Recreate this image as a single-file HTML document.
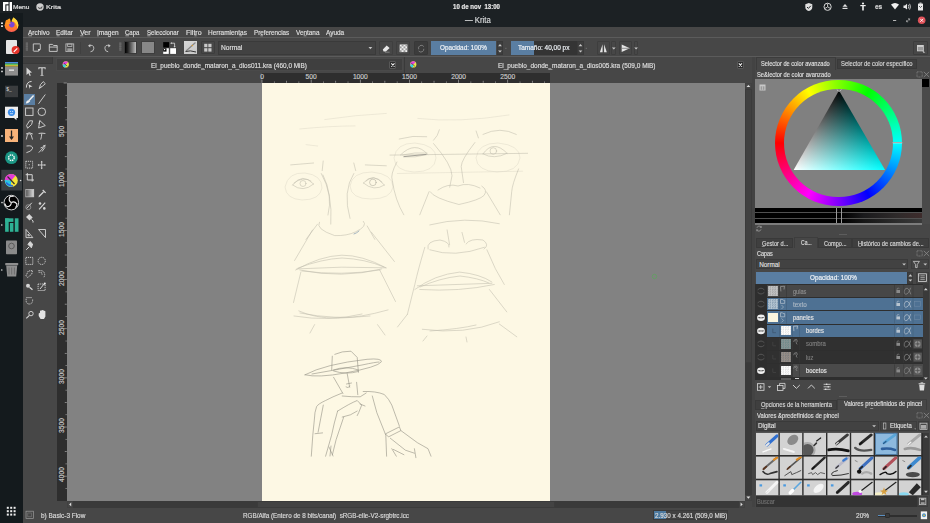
<!DOCTYPE html>
<html><head><meta charset="utf-8"><style>*{margin:0;padding:0;box-sizing:border-box}
html,body{width:930px;height:523px;overflow:hidden;background:#1c2124;font-family:"Liberation Sans",sans-serif;position:relative}
.a{position:absolute}
.t{position:absolute;white-space:nowrap;line-height:1;-webkit-text-stroke:0.18px currentColor;}
svg{overflow:visible}
</style></head><body>
<div class="a" style="left:0px;top:0px;width:930px;height:27px;background:#1c2124;"></div>
<div class="a" style="left:0px;top:13px;width:23px;height:510px;background:#141a1d;"></div>
<svg class="a" style="left:3px;top:2px;" width="9" height="9" viewBox="0 0 9 9"><rect x="0" y="0" width="5.5" height="2.3" fill="#fff"/><rect x="0" y="0" width="2.3" height="9" fill="#fff"/><rect x="3.4" y="3.4" width="2.1" height="5.6" fill="#fff"/><rect x="6.6" y="0" width="2.4" height="9" fill="#fff"/></svg>
<div class="t" style="left:12.9px;top:4.0px;font-size:6px;color:#e0e0e0;transform-origin:0 0;transform:scaleX(1.0927);">Menu</div>
<svg class="a" style="left:36px;top:3px;" width="8" height="8" viewBox="0 0 8 8"><circle cx="4" cy="4" r="3.7" fill="#cfcfcf"/><path d="M1.5 3.5 L4 5 L6.5 3 L6 5.5 L3 6 Z" fill="#555"/></svg>
<div class="t" style="left:45.6px;top:4.0px;font-size:6px;color:#e0e0e0;transform-origin:0 0;transform:scaleX(1.2159);">Krita</div>
<div class="t" style="left:453.2px;top:4.4px;font-size:6.4px;color:#e6e6e6;font-weight:bold;transform-origin:0 0;transform:scaleX(0.9505);">10 de nov &nbsp;13:00</div>
<div class="t" style="left:465.3px;top:17px;font-size:8.2px;color:#d8dadb;transform-origin:0 0;transform:scaleX(0.9437);">— Krita</div>
<svg class="a" style="left:0px;top:0px;" width="930" height="27" viewBox="0 0 930 27">
<path d="M808.8 3 L812.3 4.3 L812.3 7 Q812.3 10 808.8 11 Q805.3 10 805.3 7 L805.3 4.3 Z" fill="#e0e0e0"/>
<path d="M807 7 L808.4 8.4 L810.8 5.8" stroke="#1c2124" stroke-width="1" fill="none"/>
<circle cx="827.6" cy="6.8" r="3.6" fill="none" stroke="#d8d8d8" stroke-width="1"/>
<path d="M827.6 3.5 L827.6 6.8 L824.8 8.5 M827.6 6.8 L830.4 8.5" stroke="#d8d8d8" stroke-width="0.9"/>
<path d="M842.5 6.8 L845 4 L847.5 6.8 Z" fill="#e0e0e0"/><rect x="842.5" y="7.8" width="5" height="1.2" fill="#e0e0e0"/>
<circle cx="863" cy="3.5" r="1.1" fill="#eee"/><rect x="860.3" y="5" width="5.4" height="1.2" fill="#eee"/><rect x="862.2" y="5" width="1.6" height="5.5" fill="#eee"/>
<path d="M891 4.5 Q895 1.5 899 4.5 L895 9.5 Z" fill="#f0f0f0"/>
<path d="M903.5 5.5 L905 5.5 L907 3.8 L907 9.6 L905 8 L903.5 8 Z" fill="#e8e8e8"/><path d="M908.2 4.8 Q909.5 6.7 908.2 8.6 M909.6 3.8 Q911.4 6.7 909.6 9.6" stroke="#e8e8e8" stroke-width="0.8" fill="none"/>
<rect x="918" y="3.5" width="5" height="7" rx="0.6" fill="#e8e8e8"/><rect x="919.5" y="2.6" width="2" height="1" fill="#e8e8e8"/><path d="M919 6 L920.5 7.5 L922 6" stroke="#1c2124" stroke-width="0.7" fill="none"/>
</svg>
<div class="t" style="left:875.4px;top:2.9px;font-size:8px;color:#d8d8d8;font-weight:bold;transform-origin:0 0;transform:scaleX(0.8091);">es</div>
<svg class="a" style="left:0px;top:0px;" width="930" height="27" viewBox="0 0 930 27"><rect x="893" y="20" width="3.2" height="0.9" fill="#c8c8c8"/><path d="M906.6 21.8 L909.6 18.8 M908 18.8 L909.6 18.8 L909.6 20.4 M906.6 20.2 L906.6 21.8 L908.2 21.8" stroke="#bbb" stroke-width="0.7" fill="none"/><circle cx="921.7" cy="20.3" r="3.8" fill="#e0525a"/><path d="M920.2 18.8 L923.2 21.8 M923.2 18.8 L920.2 21.8" stroke="#fff" stroke-width="0.9"/></svg>
<svg class="a" style="left:0px;top:0px;" width="23" height="523" viewBox="0 0 23 523">
<rect x="1" y="22.4" width="2" height="1.6" fill="#ddd"/><rect x="1" y="25.4" width="2" height="1.6" fill="#ddd"/>
<defs><linearGradient id="ffg" x1="0" y1="0" x2="0" y2="1"><stop offset="0" stop-color="#ffa41c"/><stop offset="0.7" stop-color="#ff7a2a"/><stop offset="1" stop-color="#ff5a5a"/></linearGradient></defs>
<circle cx="11.5" cy="25.2" r="6.9" fill="url(#ffg)"/>
<path d="M11.5 24.5 L9.6 17.2 Q11.5 16.6 13 17.6 Z" fill="#141a1d"/>
<path d="M5.5 22 L6.3 19.8 L7.3 21 L8.2 19.8 L9 21.5 Z" fill="#ff8a1e"/>
<path d="M11.3 21.6 L13.4 17.3 Q17.6 19.8 18.3 24.6 Q18.4 27.2 17.2 28.8 Q17.2 23.8 13.6 21.6 Z" fill="#ffd53a"/>
<circle cx="11.8" cy="24.6" r="2.8" fill="#7b46d6"/>
<path d="M6.8 23.3 Q9 23 10.5 23.6" stroke="#ffa030" stroke-width="1" fill="none"/>
<rect x="6" y="40" width="11" height="14" rx="0.8" fill="#e6e6e6"/>
<circle cx="15.6" cy="50" r="4" fill="#e5332a"/><path d="M13.8 51.8 L17.3 48.3" stroke="#fff" stroke-width="1.2"/>
<circle cx="2" cy="68" r="0.9" fill="#ddd"/><circle cx="2" cy="71.4" r="0.9" fill="#ddd"/>
<rect x="5" y="62" width="13" height="1.6" fill="#4a8be0"/><rect x="5" y="63.6" width="13" height="1.6" fill="#5fc05a"/><rect x="5" y="65.2" width="13" height="1.4" fill="#f0d13a"/>
<rect x="5" y="66.6" width="13" height="9" fill="#8c8c8c"/><rect x="9" y="69.5" width="5" height="1.3" fill="#eee"/>
<rect x="5" y="85.7" width="13" height="11.5" fill="#3a3d3f"/><text x="6.2" y="90.5" font-size="4.5" fill="#eee" font-family="Liberation Mono">$_</text>
<rect x="5" y="106.7" width="13" height="11.3" fill="#eeeeee"/><path d="M14 118 L16.5 120.3 L16.5 118 Z" fill="#eee"/>
<circle cx="11.5" cy="112.3" r="3.6" fill="#3b8de8"/><circle cx="10.3" cy="111.5" r="0.5" fill="#fff"/><circle cx="12.7" cy="111.5" r="0.5" fill="#fff"/><rect x="10" y="113.5" width="3" height="0.6" fill="#fff"/>
<circle cx="2" cy="136" r="0.9" fill="#ddd"/>
<rect x="5" y="129" width="13" height="13" fill="#f7b37a"/><path d="M11.5 130.5 L11.5 139" stroke="#222" stroke-width="1.3"/><path d="M9 136.5 L11.5 140 L14 136.5 Z" fill="#222"/>
<circle cx="11.4" cy="157.7" r="6.4" fill="#1a9584"/><circle cx="11.4" cy="157.7" r="2.8" fill="none" stroke="#fff" stroke-width="1.4" stroke-dasharray="1.5 0.7"/>
<rect x="1.3" y="169.8" width="20.8" height="20.7" fill="#3a3f42"/>
<circle cx="1.8" cy="180.5" r="0.8" fill="#ddd"/><circle cx="20.6" cy="180.5" r="0.8" fill="#ddd"/>
<circle cx="11.3" cy="180.5" r="6.5" fill="#f4e63a"/>
<path d="M11.3 180.5 L4.8 180.5 A6.5 6.5 0 0 1 15.6 175.6 Z" fill="#e23bd8"/>
<path d="M11.3 180.5 L4.8 180 A6.5 6.5 0 0 0 10.5 187 Z" fill="#27c8e8"/>
<path d="M6 182.5 Q9 186 13 186" stroke="#2a6bd8" stroke-width="1.5" fill="none"/>
<path d="M7.5 176.5 L14.5 184" stroke="#333" stroke-width="1.2"/>
<circle cx="2" cy="202.6" r="0.8" fill="#ddd"/>
<circle cx="11.3" cy="202.6" r="7.3" fill="#000" stroke="#e8e8e8" stroke-width="0.9"/>
<path transform="rotate(0 11.3 202.6)" d="M11.3 202.6 Q8.2 200.8 9.6 197.2 Q11.5 195.6 13.6 196.6" fill="none" stroke="#f4f4f4" stroke-width="1.1"/><path transform="rotate(120 11.3 202.6)" d="M11.3 202.6 Q8.2 200.8 9.6 197.2 Q11.5 195.6 13.6 196.6" fill="none" stroke="#f4f4f4" stroke-width="1.1"/><path transform="rotate(240 11.3 202.6)" d="M11.3 202.6 Q8.2 200.8 9.6 197.2 Q11.5 195.6 13.6 196.6" fill="none" stroke="#f4f4f4" stroke-width="1.1"/>
<circle cx="1.8" cy="225" r="0.8" fill="#ddd"/>
<rect x="5.1" y="218.3" width="8.3" height="3.6" fill="#2eb194"/><rect x="5.1" y="218.3" width="3.6" height="13.5" fill="#2eb194"/><rect x="9.9" y="223" width="3.5" height="8.8" fill="#2eb194"/><rect x="14.8" y="218.3" width="3.7" height="13.5" fill="#2eb194"/>
<rect x="6" y="240.5" width="11" height="13.7" rx="0.7" fill="#8a8a8a"/><circle cx="11.5" cy="246" r="2.8" fill="none" stroke="#5a5a5a" stroke-width="1"/>
<circle cx="1.8" cy="270" r="0.8" fill="#ddd"/>
<rect x="5.2" y="263" width="13" height="2.3" rx="0.6" fill="#8e8e8e"/><path d="M6.2 265.5 L17.2 265.5 L16.2 276.6 L7.2 276.6 Z" fill="#8e8e8e"/>
<path d="M9 267.5 L9 274.5 M11.7 267.5 L11.7 274.5 M14.4 267.5 L14.4 274.5" stroke="#6a6a6a" stroke-width="0.9"/>
<rect x="6.8" y="506.8" width="2" height="2" fill="#eee"/><rect x="10.2" y="506.8" width="2" height="2" fill="#eee"/><rect x="13.6" y="506.8" width="2" height="2" fill="#eee"/><rect x="6.8" y="510.2" width="2" height="2" fill="#eee"/><rect x="10.2" y="510.2" width="2" height="2" fill="#eee"/><rect x="13.6" y="510.2" width="2" height="2" fill="#eee"/><rect x="6.8" y="513.6" width="2" height="2" fill="#eee"/><rect x="10.2" y="513.6" width="2" height="2" fill="#eee"/><rect x="13.6" y="513.6" width="2" height="2" fill="#eee"/></svg>
<div class="a" style="left:23px;top:27px;width:907px;height:496px;background:#474747;"></div>
<div class="a" style="left:23px;top:37px;width:907px;height:1px;background:#5b5b5b;"></div>
<div class="a" style="left:23px;top:56px;width:907px;height:1px;background:#5b5b5b;"></div>
<div class="t" style="left:28.3px;top:29.9px;font-size:6.6px;color:#dedede;transform-origin:0 0;transform:scaleX(0.9815);">Archivo</div>
<div class="t" style="left:56.2px;top:29.9px;font-size:6.6px;color:#dedede;transform-origin:0 0;transform:scaleX(0.9802);">Editar</div>
<div class="t" style="left:79.9px;top:29.9px;font-size:6.6px;color:#dedede;transform-origin:0 0;transform:scaleX(1.0801);">Ver</div>
<div class="t" style="left:96.9px;top:29.9px;font-size:6.6px;color:#dedede;transform-origin:0 0;transform:scaleX(0.9857);">Imagen</div>
<div class="t" style="left:125.2px;top:29.9px;font-size:6.6px;color:#dedede;transform-origin:0 0;transform:scaleX(0.9127);">Capa</div>
<div class="t" style="left:147.1px;top:29.9px;font-size:6.6px;color:#dedede;transform-origin:0 0;transform:scaleX(0.9192);">Seleccionar</div>
<div class="t" style="left:185.8px;top:29.9px;font-size:6.6px;color:#dedede;transform-origin:0 0;transform:scaleX(1.0637);">Filtro</div>
<div class="t" style="left:208.1px;top:29.9px;font-size:6.6px;color:#dedede;transform-origin:0 0;transform:scaleX(0.9820);">Herramientas</div>
<div class="t" style="left:253.7px;top:29.9px;font-size:6.6px;color:#dedede;transform-origin:0 0;transform:scaleX(0.9500);">Preferencias</div>
<div class="t" style="left:295.5px;top:29.9px;font-size:6.6px;color:#dedede;transform-origin:0 0;transform:scaleX(0.9701);">Ventana</div>
<div class="t" style="left:325.5px;top:29.9px;font-size:6.6px;color:#dedede;transform-origin:0 0;transform:scaleX(0.9788);">Ayuda</div>
<svg class="a" style="left:0px;top:0px;" width="930" height="60" viewBox="0 0 930 60"><rect x="25.8" y="42.3" width="2.2" height="8.6" fill="#5e5e5e"/><rect x="25.8" y="42.8" width="2.2" height="0.7" fill="#6d6d6d"/><rect x="25.8" y="44.5" width="2.2" height="0.7" fill="#6d6d6d"/><rect x="25.8" y="46.2" width="2.2" height="0.7" fill="#6d6d6d"/><rect x="25.8" y="47.9" width="2.2" height="0.7" fill="#6d6d6d"/><rect x="25.8" y="49.6" width="2.2" height="0.7" fill="#6d6d6d"/><rect x="119.2" y="42.3" width="2.2" height="8.6" fill="#5e5e5e"/><rect x="119.2" y="42.8" width="2.2" height="0.7" fill="#6d6d6d"/><rect x="119.2" y="44.5" width="2.2" height="0.7" fill="#6d6d6d"/><rect x="119.2" y="46.2" width="2.2" height="0.7" fill="#6d6d6d"/><rect x="119.2" y="47.9" width="2.2" height="0.7" fill="#6d6d6d"/><rect x="119.2" y="49.6" width="2.2" height="0.7" fill="#6d6d6d"/><path d="M33.3 43.9 L39.8 43.9 Q40.3 43.9 40.3 44.4 L40.3 49.5 L38.4 51.2 L33.8 51.2 Q33.3 51.2 33.3 50.7 Z" fill="none" stroke="#cfcfcf" stroke-width="0.9"/><path d="M38.2 51.3 L40.4 49.1 L38.2 49.1 Z" fill="#e8e8e8"/><path d="M49.3 44.4 L52.6 44.4 L53.6 45.5 L57.2 45.5 L57.2 51.4 L49.3 51.4 Z" fill="none" stroke="#cfcfcf" stroke-width="0.9"/><rect x="49.3" y="46.6" width="7.9" height="0.9" fill="#cfcfcf"/><rect x="65.9" y="43.9" width="7.8" height="7.6" fill="none" stroke="#b8b8b8" stroke-width="0.9"/><rect x="67.6" y="44" width="4.3" height="2.5" fill="none" stroke="#b8b8b8" stroke-width="0.8"/><rect x="67.3" y="48.3" width="5" height="3.1" fill="#9a9a9a"/><rect x="80.4" y="42" width="0.6" height="12" fill="#3c3c3c"/><path d="M89 45.6 Q93.8 44.4 93.8 48.3 Q93.8 51.5 90.5 51.8" fill="none" stroke="#c8c8c8" stroke-width="0.9"/><path d="M88 45.7 L90.3 43.9 L90.3 47.5 Z" fill="#c8c8c8"/><path d="M109.7 45.6 Q104.9 44.4 104.9 48.3 Q104.9 51.5 108.2 51.8" fill="none" stroke="#c8c8c8" stroke-width="0.9"/><path d="M110.7 45.7 L108.4 43.9 L108.4 47.5 Z" fill="#c8c8c8"/></svg>
<div class="a" style="left:124.3px;top:41.2px;width:13.2px;height:12.9px;background:linear-gradient(to right,#000 0%,#222 25%,#bdbdbd 100%);border:1px solid #3a3a3a;"></div>
<div class="a" style="left:141.1px;top:41.2px;width:13.5px;height:12.9px;background:#878787;border:1px solid #3e3e3e;"></div>
<svg class="a" style="left:0px;top:0px;" width="930" height="60" viewBox="0 0 930 60"><rect x="163.2" y="42.1" width="5.9" height="5.4" fill="#000"/><rect x="170.2" y="48.2" width="5.8" height="5.7" fill="#fff"/><rect x="163.2" y="48.3" width="5.6" height="5.6" fill="#fff"/><rect x="163.2" y="48.3" width="3.3" height="3.3" fill="#000"/><rect x="164" y="49" width="1.2" height="1.2" fill="#fff"/><path d="M171 43.2 L174.6 43.2 L174.6 46.8" fill="none" stroke="#ddd" stroke-width="0.8"/><path d="M170.3 43.2 L171.6 42.1 L171.6 44.3 Z M174.6 47.6 L173.5 46.2 L175.7 46.2 Z" fill="#ddd"/></svg>
<div class="a" style="left:184.1px;top:41.2px;width:12.9px;height:12.9px;background:linear-gradient(160deg,#d8d8d8,#c6c6c6);"></div>
<svg class="a" style="left:184.1px;top:41.2px;" width="13" height="13" viewBox="0 0 13 13"><path d="M2 10 Q6 6.5 11.5 1.5" stroke="#888" stroke-width="1.2" fill="none"/><path d="M1.5 10.5 Q6 9 12 11" stroke="#333" stroke-width="1" fill="none"/><circle cx="8.3" cy="4.5" r="0.7" fill="#e0a030"/></svg>
<div class="a" style="left:201.3px;top:41px;width:13.5px;height:13.2px;background:#474747;border:1px solid #3d3d3d;border-radius:1px;"></div>
<svg class="a" style="left:0px;top:0px;" width="930" height="60" viewBox="0 0 930 60"><rect x="204.2" y="43.8" width="3.2" height="3.4" fill="#c9c9c9"/><rect x="208.3" y="43.8" width="3.2" height="3.4" fill="#c9c9c9"/><rect x="204.2" y="48.2" width="3.2" height="3.4" fill="#c9c9c9"/><rect x="208.3" y="48.2" width="3.2" height="3.4" fill="#c9c9c9"/></svg>
<div class="a" style="left:218.3px;top:40.6px;width:157.5px;height:14.4px;background:#424242;border:1px solid #3a3a3a;"></div>
<div class="t" style="left:220.5px;top:45.3px;font-size:6.4px;color:#dedede;transform-origin:0 0;transform:scaleX(1.0327);">Normal</div>
<svg class="a" style="left:0px;top:0px;" width="930" height="60" viewBox="0 0 930 60"><path d="M368.5 47 L372.3 47 L370.4 49.2 Z" fill="#c4c4c4"/></svg>
<div class="a" style="left:379.1px;top:41.2px;width:13.7px;height:13.8px;background:#474747;border:1px solid #3f3f3f;border-radius:1px;"></div>
<div class="a" style="left:396.3px;top:41.2px;width:14.2px;height:13.8px;background:#474747;border:1px solid #3f3f3f;border-radius:1px;"></div>
<div class="a" style="left:414.3px;top:41.2px;width:13.7px;height:13.8px;background:#3c3c3c;border:1px solid #383838;border-radius:1px;"></div>
<svg class="a" style="left:0px;top:0px;" width="930" height="60" viewBox="0 0 930 60"><path d="M382.8 49.6 L386.7 45.4 L389.6 47.9 L385.9 51.6 L383.6 51.6 Z" fill="#e8e8e8"/><rect x="385" y="51.8" width="4.6" height="0.6" fill="#aaa"/><rect x="399.7" y="44.5" width="7.6" height="7.6" fill="#f0f0f0"/><rect x="401.6" y="44.5" width="1.9" height="1.9" fill="#999"/><rect x="405.4" y="44.5" width="1.9" height="1.9" fill="#999"/><rect x="399.7" y="46.4" width="1.9" height="1.9" fill="#999"/><rect x="403.5" y="46.4" width="1.9" height="1.9" fill="#999"/><rect x="401.6" y="48.3" width="1.9" height="1.9" fill="#999"/><rect x="405.4" y="48.3" width="1.9" height="1.9" fill="#999"/><rect x="399.7" y="50.2" width="1.9" height="1.9" fill="#999"/><rect x="403.5" y="50.2" width="1.9" height="1.9" fill="#999"/><path d="M418.7 49.3 A2.9 2.9 0 0 1 423.8 46.6 M423.8 48.8 A2.9 2.9 0 0 1 418.7 51" fill="none" stroke="#8a8a8a" stroke-width="0.8"/></svg>
<div class="a" style="left:431px;top:41px;width:65.1px;height:14.3px;background:#5a7ea2;"></div>
<div class="t" style="left:440px;top:45.2px;font-size:6.4px;color:#eef2f6;transform-origin:0 0;transform:scaleX(0.9932);">Opacidad: 100%</div>
<div class="a" style="left:496.7px;top:41px;width:6.5px;height:14.3px;background:#3e3e3e;border:1px solid #393939;"></div>
<svg class="a" style="left:0px;top:0px;" width="930" height="60" viewBox="0 0 930 60"><path d="M498.1 46.2 L501.9 46.2 L500 44 Z M498.1 50.4 L501.9 50.4 L500 52.6 Z" fill="#c8c8c8"/><rect x="505.2" y="47.9" width="1.3" height="0.6" fill="#888"/></svg>
<div class="a" style="left:511px;top:41px;width:66px;height:14.3px;background:#343434;"></div>
<div class="a" style="left:511px;top:41px;width:22.8px;height:14.3px;background:#5a7ea2;"></div>
<div class="t" style="left:518.1px;top:45.2px;font-size:6.4px;color:#eef2f6;transform-origin:0 0;transform:scaleX(1.0122);">Tamaño: 40,00 px</div>
<div class="a" style="left:577px;top:41px;width:7px;height:14.3px;background:#3e3e3e;border:1px solid #393939;"></div>
<svg class="a" style="left:0px;top:0px;" width="930" height="60" viewBox="0 0 930 60"><path d="M578.6 46.2 L582.4 46.2 L580.5 44 Z M578.6 50.4 L582.4 50.4 L580.5 52.6 Z" fill="#c8c8c8"/><rect x="585.7" y="47.9" width="1.3" height="0.6" fill="#888"/></svg>
<div class="a" style="left:596.9px;top:41px;width:12.9px;height:14px;background:#474747;border:1px solid #3e3e3e;border-radius:1px;"></div>
<div class="a" style="left:611.4px;top:41px;width:4.9px;height:14px;background:#474747;border:1px solid #3e3e3e;border-radius:1px;"></div>
<div class="a" style="left:619px;top:41px;width:13.4px;height:14px;background:#474747;border:1px solid #3e3e3e;border-radius:1px;"></div>
<div class="a" style="left:634px;top:41px;width:4.3px;height:14px;background:#474747;border:1px solid #3e3e3e;border-radius:1px;"></div>
<svg class="a" style="left:0px;top:0px;" width="930" height="60" viewBox="0 0 930 60"><path d="M599.9 52.2 L602.6 44.2 L602.6 52.2 Z M606.8 52.2 L604.1 44.2 L604.1 52.2 Z" fill="#e6e6e6"/><path d="M611.9 47.4 L615.7 47.4 L613.8 49.4 Z M634.2 47.4 L638 47.4 L636.1 49.4 Z" fill="#c4c4c4"/><path d="M621.7 44.6 L629.8 48.3 L621.7 52 Z" fill="#e6e6e6"/><path d="M621.7 48.3 L629.8 48.3" stroke="#777" stroke-width="0.8"/></svg>
<div class="a" style="left:912.8px;top:40.8px;width:14.8px;height:14.2px;background:#474747;border:1px solid #3c3c3c;border-radius:1px;"></div>
<svg class="a" style="left:0px;top:0px;" width="930" height="60" viewBox="0 0 930 60"><rect x="917" y="45" width="6.8" height="6.3" fill="#cfcfcf"/><rect x="917.8" y="46.9" width="5.2" height="3.6" fill="#9a9a9a"/><path d="M922.5 50.6 L925.3 52.4 L923.2 52.8 Z" fill="#ccc"/></svg>
<div class="a" style="left:23px;top:57px;width:34px;height:450px;background:#474747;"></div>
<div class="a" style="left:23px;top:57px;width:30.3px;height:6.8px;background:#3e3e3e;border-right:1px solid #393939;border-bottom:1px solid #393939;"></div>
<div class="a" style="left:24.3px;top:93.9px;width:10.7px;height:10.7px;background:#5a7ea2;"></div>
<svg class="a" style="left:0px;top:0px;" width="60" height="330" viewBox="0 0 60 330"><path d="M26.5 67.5 L26.5 75 L28.4 73.3 L29.7 76 L30.8 75.4 L29.6 72.8 L32 72.6 Z" fill="#d6d6d6"/><path d="M38.4 67.3 L45.6 67.3 L45.6 69.2 L44.8 69.2 L44.6 68.3 L42.6 68.3 L42.6 74.9 L43.6 75.2 L43.6 75.8 L40.4 75.8 L40.4 75.2 L41.4 74.9 L41.4 68.3 L39.4 68.3 L39.2 69.2 L38.4 69.2 Z" fill="#d6d6d6"/><path d="M26.4 87.6 Q26.4 81.6 31.6 81.4" fill="none" stroke="#d6d6d6" stroke-width="1"/><path d="M28.5 84.2 L32.5 86.5 L30 87 L29.6 89 Z" fill="#d6d6d6"/><path d="M39.3 88.5 L40.5 84.6 L43.2 81.6 L45.3 83.7 L42.3 86.4 Z" fill="none" stroke="#d6d6d6" stroke-width="0.9"/><path d="M39.3 88.5 L41.6 86.2" fill="none" stroke="#d6d6d6" stroke-width="0.7"/><path d="M25.8 103.4 Q26.2 100.8 28 100.2 Q29.6 100.6 29.4 101.8 Q28.4 103.6 25.8 103.4 Z" fill="#f0f0f0"/><path d="M29 100.6 L33.6 95.4" fill="none" stroke="#f0f0f0" stroke-width="1.5"/><path d="M28.6 100.4 L29.8 101.6" fill="none" stroke="#f0f0f0" stroke-width="1.1"/><path d="M38.5 103.8 L45.3 94.5" fill="none" stroke="#d6d6d6" stroke-width="0.9"/><rect x="25.6" y="108" width="7.4" height="7.4" fill="none" stroke="#d6d6d6" stroke-width="0.9"/><circle cx="41.8" cy="111.8" r="3.8" fill="none" stroke="#d6d6d6" stroke-width="0.9"/><path d="M26.6 125.5 L29.5 120.8 L32.6 120.8 L31.6 124.5 L27.6 128.2 Z" fill="none" stroke="#d6d6d6" stroke-width="0.9"/><path d="M38.6 128 L45.3 125.6 L39.8 120.6 Z M39.8 120.6 L39 124" fill="none" stroke="#d6d6d6" stroke-width="0.9"/><path d="M26.3 139.5 L27.5 134.4 Q29.3 133 31 134.4 L32.5 139.5 M26 134 Q29.3 131.5 32.8 134" fill="none" stroke="#d6d6d6" stroke-width="0.9"/><path d="M38.6 133.5 Q41.5 132.8 45.4 133.5 M41.8 133.3 Q41.5 137 40.7 139.6" fill="none" stroke="#d6d6d6" stroke-width="0.9"/><path d="M26.5 146 Q33 145 32.5 148.5 Q31.5 151.5 26.4 152.7" fill="none" stroke="#d6d6d6" stroke-width="0.9"/><path d="M38.8 152.6 L43.5 147.5 M40.5 148 L45.5 146 M42 151.5 L45 147.3 M43 146 L45.5 145.2" fill="none" stroke="#d6d6d6" stroke-width="0.9"/><rect x="25.8" y="161.3" width="6.8" height="6.8" fill="none" stroke="#d6d6d6" stroke-width="0.9" stroke-dasharray="1.2 0.8"/><rect x="28.7" y="164.2" width="1" height="1" fill="#d6d6d6"/><path d="M41.7 161.4 L41.7 168.6 M38.1 165 L45.3 165" fill="none" stroke="#d6d6d6" stroke-width="0.9"/><path d="M41.7 160.8 L40.6 162.2 L42.8 162.2 Z M41.7 169.2 L40.6 167.8 L42.8 167.8 Z M37.5 165 L38.9 163.9 L38.9 166.1 Z M45.9 165 L44.5 163.9 L44.5 166.1 Z" fill="#d6d6d6"/><path d="M27.3 173 L27.3 180 L34 180 M25.7 174.7 L32.2 174.7 L32.2 181.5" fill="none" stroke="#d6d6d6" stroke-width="1"/><defs><linearGradient id="tg"><stop offset="0" stop-color="#555"/><stop offset="1" stop-color="#ddd"/></linearGradient></defs><rect x="25.8" y="189.3" width="8" height="7.6" fill="url(#tg)" stroke="#cfcfcf" stroke-width="0.6"/><path d="M39 196.5 L43.5 192 M42.7 190 L45.6 192.9" fill="none" stroke="#d6d6d6" stroke-width="1.3"/><path d="M39 196.5 L38.6 197.2" fill="none" stroke="#d6d6d6" stroke-width="0.8"/><path d="M26.5 208.5 L31.8 202.8" fill="none" stroke="#d6d6d6" stroke-width="1"/><circle cx="28.3" cy="207.2" r="2.5" fill="none" stroke="#aaa" stroke-width="0.7"/><path d="M39.1 209.3 L45.2 202.7" fill="none" stroke="#d6d6d6" stroke-width="1.1"/><circle cx="40" cy="203.5" r="1.3" fill="#d6d6d6"/><circle cx="44.3" cy="208.4" r="1.3" fill="#d6d6d6"/><path d="M26 217 L29.3 214 L32.7 217.4 L29.5 220.6 Z" fill="#d6d6d6"/><path d="M31.6 219.5 Q33.8 221 33 222.6" fill="none" stroke="#d6d6d6" stroke-width="1"/><path d="M26 237.6 L26 229.4 L32.8 237.6 Z M28 235.8 L28 234 L29.6 235.8 Z" fill="none" stroke="#d6d6d6" stroke-width="0.9"/><path d="M38.5 229.5 L45.5 229.5 L45.5 237.6 Z" fill="none" stroke="#d6d6d6" stroke-width="0.9"/><path d="M26.2 249.8 L29 247 M28 244.4 L31.4 247.8 L32.6 244 L30 241.6 Z" fill="none" stroke="#d6d6d6" stroke-width="1"/><path d="M28 244.4 L31.4 247.8 L32.6 244 L30 241.6 Z" fill="#d6d6d6"/><rect x="25.8" y="257.4" width="7" height="7" fill="none" stroke="#d6d6d6" stroke-width="0.9" stroke-dasharray="1.2 0.8"/><circle cx="41.7" cy="260.9" r="3.6" fill="none" stroke="#d6d6d6" stroke-width="0.9" stroke-dasharray="1.2 0.8"/><path d="M26 275.7 L28.3 271 L32.5 270.5 L31.7 274.3 L27.6 277.4 Z" fill="none" stroke="#d6d6d6" stroke-width="0.9" stroke-dasharray="1.2 0.8"/><path d="M38.4 270.6 Q43 270 44.3 272.8 Q45.3 275.5 43.7 277.4 M38.6 272.2 L41.5 272.4 L42.2 275 " fill="none" stroke="#d6d6d6" stroke-width="0.9" stroke-dasharray="1.2 0.8"/><circle cx="28" cy="285.7" r="2" fill="#d6d6d6"/><path d="M29.5 287.2 L32.5 289.8" fill="none" stroke="#d6d6d6" stroke-width="1.3"/><rect x="38.1" y="284" width="7" height="6.5" fill="none" stroke="#d6d6d6" stroke-width="0.9" stroke-dasharray="1.2 0.8"/><path d="M40 289 L44.5 283.5" fill="none" stroke="#d6d6d6" stroke-width="1"/><circle cx="44.8" cy="283.6" r="1" fill="#eee"/><path d="M26.4 297.6 L32.4 297.6 M26.2 298.8 Q25.6 304 29.4 304 Q33 304 32.6 298.8" fill="none" stroke="#d6d6d6" stroke-width="0.9" stroke-dasharray="1.2 0.8"/><circle cx="31" cy="313.6" r="2.2" fill="none" stroke="#d6d6d6" stroke-width="0.9"/><path d="M29.4 315.3 L26.3 318.4" fill="none" stroke="#d6d6d6" stroke-width="1.1"/><path d="M38.7 313.4 L40 312.8 L40 310.8 L41 310.4 L41.5 310.4 L42.2 310 L43.2 310.3 L44.3 310.8 L45.4 311.3 L45.4 316.6 L44 319 L40.6 319 L38.7 316 Z" fill="#e2e2e2"/></svg>
<div class="a" style="left:56.1px;top:57.8px;width:347.4px;height:13.7px;background:#3f3f3f;border:1px solid #4a4a4a;"></div>
<div class="a" style="left:403.5px;top:57px;width:347px;height:15.5px;background:#474747;"></div>
<div class="a" style="left:403.5px;top:57px;width:1px;height:15.5px;background:#3a3a3a;"></div>
<div class="t" style="left:150.6px;top:61.8px;font-size:7px;color:#dedede;transform-origin:0 0;transform:scaleX(0.9201);">El_pueblo_donde_mataron_a_dios011.kra (460,0 MiB)</div>
<div class="t" style="left:497.6px;top:61.8px;font-size:7px;color:#dedede;transform-origin:0 0;transform:scaleX(0.9261);">El_pueblo_donde_mataron_a_dios005.kra (509,0 MiB)</div>
<div class="a" style="left:389.29999999999995px;top:61px;width:7.2px;height:7.8px;background:#2c2c2c;border:1px solid #575757;border-radius:1px;"></div>
<div class="a" style="left:736.8px;top:61px;width:7.2px;height:7.8px;background:#2c2c2c;border:1px solid #575757;border-radius:1px;"></div>
<svg class="a" style="left:0px;top:0px;" width="930" height="80" viewBox="0 0 930 80"><path d="M391.29999999999995 63.4 L394.5 66.6 M394.5 63.4 L391.29999999999995 66.6" stroke="#f0f0f0" stroke-width="1.1"/><path d="M738.8 63.4 L742.0 66.6 M742.0 63.4 L738.8 66.6" stroke="#f0f0f0" stroke-width="1.1"/></svg>
<svg class="a" style="left:0px;top:0px;" width="930" height="80" viewBox="0 0 930 80"><circle cx="65.8" cy="64.4" r="3.1" fill="#e8e84a"/><path d="M65.8 64.4 L62.699999999999996 64.4 A3.1 3.1 0 0 1 68.0 62.2 Z" fill="#e63fe0"/><path d="M65.8 64.4 L62.699999999999996 64.4 A3.1 3.1 0 0 0 65.39999999999999 67.5 Z" fill="#2ed0e8"/><path d="M63.8 63.2 L67.3 66.2" stroke="#333" stroke-width="0.7"/><circle cx="413.3" cy="64.4" r="3.1" fill="#e8e84a"/><path d="M413.3 64.4 L410.2 64.4 A3.1 3.1 0 0 1 415.5 62.2 Z" fill="#e63fe0"/><path d="M413.3 64.4 L410.2 64.4 A3.1 3.1 0 0 0 412.90000000000003 67.5 Z" fill="#2ed0e8"/><path d="M411.3 63.2 L414.8 66.2" stroke="#333" stroke-width="0.7"/></svg>
<div class="a" style="left:57px;top:72.5px;width:688px;height:10.5px;background:#474747;"></div>
<div class="a" style="left:262px;top:72.5px;width:288px;height:10.5px;background:#2e2e2e;"></div>
<div class="a" style="left:57px;top:83px;width:10px;height:417.5px;background:#2e2e2e;"></div>
<svg class="a" style="left:0px;top:0px;" width="930" height="523" viewBox="0 0 930 523"><rect x="261.65" y="79.60" width="0.7" height="3.2" fill="#a8a8a8"/><rect x="273.94" y="81.50" width="0.7" height="1.3" fill="#a8a8a8"/><rect x="286.22" y="80.80" width="0.7" height="2.0" fill="#a8a8a8"/><rect x="298.51" y="81.50" width="0.7" height="1.3" fill="#a8a8a8"/><rect x="310.80" y="79.60" width="0.7" height="3.2" fill="#a8a8a8"/><rect x="323.08" y="81.50" width="0.7" height="1.3" fill="#a8a8a8"/><rect x="335.37" y="80.80" width="0.7" height="2.0" fill="#a8a8a8"/><rect x="347.66" y="81.50" width="0.7" height="1.3" fill="#a8a8a8"/><rect x="359.94" y="79.60" width="0.7" height="3.2" fill="#a8a8a8"/><rect x="372.23" y="81.50" width="0.7" height="1.3" fill="#a8a8a8"/><rect x="384.52" y="80.80" width="0.7" height="2.0" fill="#a8a8a8"/><rect x="396.80" y="81.50" width="0.7" height="1.3" fill="#a8a8a8"/><rect x="409.09" y="79.60" width="0.7" height="3.2" fill="#a8a8a8"/><rect x="421.38" y="81.50" width="0.7" height="1.3" fill="#a8a8a8"/><rect x="433.66" y="80.80" width="0.7" height="2.0" fill="#a8a8a8"/><rect x="445.95" y="81.50" width="0.7" height="1.3" fill="#a8a8a8"/><rect x="458.24" y="79.60" width="0.7" height="3.2" fill="#a8a8a8"/><rect x="470.52" y="81.50" width="0.7" height="1.3" fill="#a8a8a8"/><rect x="482.81" y="80.80" width="0.7" height="2.0" fill="#a8a8a8"/><rect x="495.10" y="81.50" width="0.7" height="1.3" fill="#a8a8a8"/><rect x="507.38" y="79.60" width="0.7" height="3.2" fill="#a8a8a8"/><rect x="519.67" y="81.50" width="0.7" height="1.3" fill="#a8a8a8"/><rect x="531.96" y="80.80" width="0.7" height="2.0" fill="#a8a8a8"/><rect x="544.24" y="81.50" width="0.7" height="1.3" fill="#a8a8a8"/><rect x="63.60" y="82.65" width="3.2" height="0.7" fill="#a8a8a8"/><rect x="65.50" y="94.94" width="1.3" height="0.7" fill="#a8a8a8"/><rect x="64.80" y="107.22" width="2.0" height="0.7" fill="#a8a8a8"/><rect x="65.50" y="119.51" width="1.3" height="0.7" fill="#a8a8a8"/><rect x="63.60" y="131.80" width="3.2" height="0.7" fill="#a8a8a8"/><rect x="65.50" y="144.08" width="1.3" height="0.7" fill="#a8a8a8"/><rect x="64.80" y="156.37" width="2.0" height="0.7" fill="#a8a8a8"/><rect x="65.50" y="168.66" width="1.3" height="0.7" fill="#a8a8a8"/><rect x="63.60" y="180.94" width="3.2" height="0.7" fill="#a8a8a8"/><rect x="65.50" y="193.23" width="1.3" height="0.7" fill="#a8a8a8"/><rect x="64.80" y="205.52" width="2.0" height="0.7" fill="#a8a8a8"/><rect x="65.50" y="217.80" width="1.3" height="0.7" fill="#a8a8a8"/><rect x="63.60" y="230.09" width="3.2" height="0.7" fill="#a8a8a8"/><rect x="65.50" y="242.38" width="1.3" height="0.7" fill="#a8a8a8"/><rect x="64.80" y="254.66" width="2.0" height="0.7" fill="#a8a8a8"/><rect x="65.50" y="266.95" width="1.3" height="0.7" fill="#a8a8a8"/><rect x="63.60" y="279.24" width="3.2" height="0.7" fill="#a8a8a8"/><rect x="65.50" y="291.52" width="1.3" height="0.7" fill="#a8a8a8"/><rect x="64.80" y="303.81" width="2.0" height="0.7" fill="#a8a8a8"/><rect x="65.50" y="316.10" width="1.3" height="0.7" fill="#a8a8a8"/><rect x="63.60" y="328.38" width="3.2" height="0.7" fill="#a8a8a8"/><rect x="65.50" y="340.67" width="1.3" height="0.7" fill="#a8a8a8"/><rect x="64.80" y="352.96" width="2.0" height="0.7" fill="#a8a8a8"/><rect x="65.50" y="365.24" width="1.3" height="0.7" fill="#a8a8a8"/><rect x="63.60" y="377.53" width="3.2" height="0.7" fill="#a8a8a8"/><rect x="65.50" y="389.82" width="1.3" height="0.7" fill="#a8a8a8"/><rect x="64.80" y="402.10" width="2.0" height="0.7" fill="#a8a8a8"/><rect x="65.50" y="414.39" width="1.3" height="0.7" fill="#a8a8a8"/><rect x="63.60" y="426.68" width="3.2" height="0.7" fill="#a8a8a8"/><rect x="65.50" y="438.96" width="1.3" height="0.7" fill="#a8a8a8"/><rect x="64.80" y="451.25" width="2.0" height="0.7" fill="#a8a8a8"/><rect x="65.50" y="463.54" width="1.3" height="0.7" fill="#a8a8a8"/><rect x="63.60" y="475.82" width="3.2" height="0.7" fill="#a8a8a8"/><rect x="65.50" y="488.11" width="1.3" height="0.7" fill="#a8a8a8"/></svg>
<div class="t" style="left:260.15px;top:74.1px;font-size:6.7px;color:#c8c8c8;">0</div>
<div class="t" style="left:305.5967576791809px;top:74.1px;font-size:6.7px;color:#c8c8c8;">500</div>
<div class="t" style="left:352.8935153583618px;top:74.1px;font-size:6.7px;color:#c8c8c8;">1000</div>
<div class="t" style="left:402.04027303754265px;top:74.1px;font-size:6.7px;color:#c8c8c8;">1500</div>
<div class="t" style="left:451.1870307167236px;top:74.1px;font-size:6.7px;color:#c8c8c8;">2000</div>
<div class="t" style="left:500.33378839590443px;top:74.1px;font-size:6.7px;color:#c8c8c8;">2500</div>
<div class="t" style="left:58.9px;top:136.50px;font-size:6.7px;color:#c8c8c8;transform-origin:0 0;transform:rotate(-90deg)">500</div>
<div class="t" style="left:58.9px;top:187.49px;font-size:6.7px;color:#c8c8c8;transform-origin:0 0;transform:rotate(-90deg)">1000</div>
<div class="t" style="left:58.9px;top:236.64px;font-size:6.7px;color:#c8c8c8;transform-origin:0 0;transform:rotate(-90deg)">1500</div>
<div class="t" style="left:58.9px;top:285.79px;font-size:6.7px;color:#c8c8c8;transform-origin:0 0;transform:rotate(-90deg)">2000</div>
<div class="t" style="left:58.9px;top:334.93px;font-size:6.7px;color:#c8c8c8;transform-origin:0 0;transform:rotate(-90deg)">2500</div>
<div class="t" style="left:58.9px;top:384.08px;font-size:6.7px;color:#c8c8c8;transform-origin:0 0;transform:rotate(-90deg)">3000</div>
<div class="t" style="left:58.9px;top:433.23px;font-size:6.7px;color:#c8c8c8;transform-origin:0 0;transform:rotate(-90deg)">3500</div>
<div class="t" style="left:58.9px;top:482.37px;font-size:6.7px;color:#c8c8c8;transform-origin:0 0;transform:rotate(-90deg)">4000</div>
<div class="a" style="left:67px;top:83px;width:678px;height:417.5px;background:#828282;"></div>
<div class="a" style="left:262px;top:83px;width:288px;height:417.5px;background:#fdf8e4;"></div>
<div class="a" style="left:745.2px;top:83px;width:6.9px;height:417.8px;background:#393939;"></div>
<div class="a" style="left:745.2px;top:88.8px;width:6.9px;height:274.5px;background:#414141;border:1px solid #3b3b3b;"></div>
<div class="a" style="left:745.2px;top:83px;width:6.9px;height:5.8px;background:#474747;border:1px solid #414141;"></div>
<div class="a" style="left:745.2px;top:495px;width:6.9px;height:5.8px;background:#474747;border:1px solid #414141;"></div>
<div class="a" style="left:67px;top:500.8px;width:678px;height:6.9px;background:#3a3a3a;"></div>
<div class="a" style="left:257px;top:501px;width:298px;height:6.5px;background:#434343;border:1px solid #3b3b3b;"></div>
<div class="a" style="left:738.9px;top:500.8px;width:6px;height:6.9px;background:#474747;border:1px solid #414141;"></div>
<div class="a" style="left:67px;top:500.8px;width:6px;height:6.9px;background:#474747;border:1px solid #414141;"></div>
<svg class="a" style="left:0px;top:0px;" width="930" height="523" viewBox="0 0 930 523"><path d="M746.5 87 L750.3 87 L748.4 84.9 Z M746.5 496.6 L750.3 496.6 L748.4 498.7 Z" fill="#e0e0e0"/><path d="M71.2 502.5 L71.2 506.3 L69.1 504.4 Z M740.6 502.5 L740.6 506.3 L742.7 504.4 Z" fill="#e0e0e0"/></svg>
<div class="a" style="left:751.5px;top:57px;width:3px;height:450px;background:#434343;"></div>
<div class="a" style="left:755.6px;top:57.4px;width:80.1px;height:12.3px;background:#474747;border:1px solid #3c3c3c;border-bottom:none;"></div>
<div class="a" style="left:836.5px;top:58.5px;width:80.1px;height:10.2px;background:#3f3f3f;border:1px solid #393939;"></div>
<div class="t" style="left:761px;top:60.5px;font-size:6.8px;color:#dedede;transform-origin:0 0;transform:scaleX(0.8349);">Selector de color avanzado</div>
<div class="t" style="left:841.3px;top:61.1px;font-size:6.8px;color:#d4d4d4;transform-origin:0 0;transform:scaleX(0.8571);">Selector de color específico</div>
<div class="t" style="left:756.7px;top:71.6px;font-size:6.5px;color:#dedede;transform-origin:0 0;transform:scaleX(0.8856);">Se&amp;lector de color avanzado</div>
<svg class="a" style="left:0px;top:0px;" width="930" height="523" viewBox="0 0 930 523"><rect x="917.0" y="71.8" width="5.2" height="5.2" fill="none" stroke="#8c8c8c" stroke-width="0.7" stroke-dasharray="0.9 0.5"/><path d="M923.8000000000001 71.8 L929.2 77 M929.2 71.8 L923.8000000000001 77" stroke="#8c8c8c" stroke-width="0.8"/><rect x="917.0" y="250.8" width="5.2" height="5.2" fill="none" stroke="#8c8c8c" stroke-width="0.7" stroke-dasharray="0.9 0.5"/><path d="M923.8000000000001 250.8 L929.2 256 M929.2 250.8 L923.8000000000001 256" stroke="#8c8c8c" stroke-width="0.8"/><rect x="917.0" y="412.8" width="5.2" height="5.2" fill="none" stroke="#8c8c8c" stroke-width="0.7" stroke-dasharray="0.9 0.5"/><path d="M923.8000000000001 412.8 L929.2 418 M929.2 412.8 L923.8000000000001 418" stroke="#8c8c8c" stroke-width="0.8"/></svg>
<div class="a" style="left:754.8px;top:78.9px;width:167px;height:128.8px;background:#808080;"></div>
<div class="a" style="left:921.8px;top:78.9px;width:8.2px;height:145px;background:#4a4a4a;"></div>
<div class="a" style="left:922.2px;top:79.2px;width:7px;height:7.4px;background:#000;"></div>
<svg class="a" style="left:759.4px;top:83.8px;" width="8" height="8" viewBox="0 0 8 8"><rect x="0.5" y="0.5" width="6" height="6" fill="#c8c8c8"/><rect x="1.6" y="2.3" width="3.8" height="3.5" fill="#9a9a9a"/><path d="M3.5 2.3 L3.5 5.8" stroke="#ddd" stroke-width="0.5"/></svg>
<div class="a" style="left:774.9px;top:79.6px;width:126.8px;height:126.8px;background:conic-gradient(from -90deg,#f00,#ff0 60deg,#0f0 120deg,#0ff 180deg,#00f 240deg,#f0f 300deg,#f00 360deg);border-radius:50%;"></div>
<div class="a" style="left:783.9px;top:88.6px;width:108.8px;height:108.8px;background:#808080;border-radius:50%;"></div>
<svg class="a" style="left:0px;top:0px;" width="930" height="523" viewBox="0 0 930 523"><rect x="892.7" y="142" width="9.5" height="1.3" fill="#e8e8e8"/><rect x="892.7" y="142.6" width="9.5" height="0.4" fill="#555"/></svg>
<svg class="a" style="left:0px;top:0px;" width="930" height="523" viewBox="0 0 930 523"><defs><linearGradient id="gv" x1="0" y1="0" x2="0" y2="1"><stop offset="0" stop-color="#000"/><stop offset="1" stop-color="#0ff"/></linearGradient><linearGradient id="gr" gradientUnits="userSpaceOnUse" x1="793.6" y1="170" x2="862" y2="130.3"><stop offset="0" stop-color="#f00"/><stop offset="1" stop-color="#000"/></linearGradient><clipPath id="tc"><path d="M839 90.6 L793.6 170 L885.1 170 Z"/></clipPath></defs><g clip-path="url(#tc)" style="isolation:isolate"><rect x="790" y="90" width="98" height="80" fill="url(#gv)"/><rect x="790" y="90" width="98" height="80" fill="url(#gr)" style="mix-blend-mode:screen"/></g><path d="M836.8 89.6 L839.1 91.6 L841.4 89.6" stroke="#ddd" stroke-width="0.7" fill="none"/></svg>
<div class="a" style="left:754.8px;top:207.7px;width:167px;height:17.3px;background:#7c7c7c;"></div>
<div class="a" style="left:754.8px;top:207.7px;width:167px;height:15.3px;background:#505050;"></div>
<div class="a" style="left:754.8px;top:207.7px;width:167px;height:4.3px;background:#000;"></div>
<div class="a" style="left:754.8px;top:213.2px;width:167px;height:4.4px;background:linear-gradient(to right,#000 0%,#000 52%,#1a1a1c 65%,#2e2a2a 85%,#3e2c2c 100%);"></div>
<div class="a" style="left:754.8px;top:218.8px;width:167px;height:4.2px;background:linear-gradient(to right,#000 0%,#000 52%,#161616 65%,#2c2c2c 85%,#3a3a3a 100%);"></div>
<div class="a" style="left:836.1px;top:207.7px;width:1.4px;height:15.3px;background:#9a9a9a;"></div>
<div class="a" style="left:840.8px;top:207.7px;width:1.4px;height:15.3px;background:#9a9a9a;"></div>
<svg class="a" style="left:0px;top:0px;" width="930" height="523" viewBox="0 0 930 523"><path d="M761.2 227 A2.4 2.4 0 0 0 757 227.8 M756.8 230.2 A2.4 2.4 0 0 0 761 229.4" stroke="#9a9a9a" stroke-width="0.8" fill="none"/><path d="M761.6 225.8 L761.6 228 L759.6 227.4 Z M756.4 231.4 L756.4 229.2 L758.4 229.8 Z" fill="#9a9a9a"/></svg>
<div class="a" style="left:839px;top:234.1px;width:8px;height:0.6px;background:#5d5d5d;"></div>
<div class="a" style="left:755.8px;top:237.5px;width:37.7px;height:10.5px;background:#3f3f3f;border:1px solid #393939;"></div>
<div class="a" style="left:793.5px;top:236.5px;width:24.2px;height:11.5px;background:#474747;border:1px solid #3d3d3d;border-bottom:none;"></div>
<div class="a" style="left:817.7px;top:237.5px;width:33.9px;height:10.5px;background:#3f3f3f;border:1px solid #393939;"></div>
<div class="a" style="left:851.6px;top:237.5px;width:77.4px;height:10.5px;background:#3f3f3f;border:1px solid #393939;"></div>
<div class="t" style="left:761.6px;top:240.6px;font-size:6.5px;color:#d4d4d4;transform-origin:0 0;transform:scaleX(0.8667);">Gestor d...</div>
<div class="t" style="left:800.8px;top:240.2px;font-size:6.5px;color:#dedede;transform-origin:0 0;transform:scaleX(0.7795);">Ca...</div>
<div class="t" style="left:823.8px;top:240.6px;font-size:6.5px;color:#d4d4d4;transform-origin:0 0;transform:scaleX(0.8532);">Compo...</div>
<div class="t" style="left:858.2px;top:240.6px;font-size:6.5px;color:#d4d4d4;transform-origin:0 0;transform:scaleX(0.8772);">Histórico de cambios de...</div>
<div class="t" style="left:756.8px;top:250.5px;font-size:6.5px;color:#dedede;transform-origin:0 0;transform:scaleX(0.8409);">Capas</div>
<div class="a" style="left:755.8px;top:259.3px;width:152px;height:10.2px;background:#424242;border:1px solid #3a3a3a;"></div>
<div class="t" style="left:759.2px;top:261.5px;font-size:6.4px;color:#dedede;">Normal</div>
<div class="a" style="left:910.6px;top:259.3px;width:18.4px;height:10.2px;background:#444;border:1px solid #3c3c3c;"></div>
<svg class="a" style="left:0px;top:0px;" width="930" height="523" viewBox="0 0 930 523"><path d="M902.2 263.6 L906 263.6 L904.1 265.6 Z M923.4 263.6 L927.2 263.6 L925.3 265.6 Z" fill="#c4c4c4"/><path d="M913.4 261.4 L919.4 261.4 L917.2 264.6 L917.2 267.6 L915.6 267.6 L915.6 264.6 Z" fill="none" stroke="#ddd" stroke-width="0.7"/></svg>
<div class="a" style="left:755.8px;top:271.5px;width:151.4px;height:12.5px;background:#5a7ea2;"></div>
<div class="t" style="left:809.8px;top:275.2px;font-size:6.6px;color:#eef2f6;transform-origin:0 0;transform:scaleX(0.9631);">Opacidad: 100%</div>
<div class="a" style="left:907.3px;top:271.5px;width:6.2px;height:12.5px;background:#3e3e3e;border:1px solid #393939;"></div>
<svg class="a" style="left:0px;top:0px;" width="930" height="523" viewBox="0 0 930 523"><path d="M908.5 276.4 L912.3 276.4 L910.4 274.2 Z M908.5 279.4 L912.3 279.4 L910.4 281.6 Z" fill="#c8c8c8"/></svg>
<div class="a" style="left:915.8px;top:271.5px;width:13.2px;height:12.5px;background:#474747;border:1px solid #3c3c3c;"></div>
<svg class="a" style="left:0px;top:0px;" width="930" height="523" viewBox="0 0 930 523"><rect x="918.6" y="273.8" width="7.8" height="7.6" fill="none" stroke="#d4d4d4" stroke-width="0.8"/><path d="M920.4 275.8 L924.8 275.8 M920.4 277.6 L924.8 277.6 M920.4 279.4 L924.8 279.4 M918.6 275.8 L919.6 275.8" stroke="#d4d4d4" stroke-width="0.6"/></svg>
<div class="a" style="left:755.4px;top:284px;width:167.4px;height:95.8px;background:#2e2e2e;"></div>
<div class="a" style="left:922.8px;top:284px;width:6.2px;height:95.8px;background:#3a3a3a;"></div>
<svg class="a" style="left:0px;top:0px;" width="930" height="523" viewBox="0 0 930 523"><path d="M923.9 290.2 L927.7 290.2 L925.8 288 Z M923.9 377.4 L927.7 377.4 L925.8 379.6 Z" fill="#d0d0d0"/></svg>
<div class="a" style="left:766.6px;top:285px;width:156.2px;height:12.2px;background:#474747;"></div>
<div class="a" style="left:768px;top:286.2px;width:10.1px;height:9.6px;background:repeating-conic-gradient(#c4c4c4 0% 25%,#a6a6a6 0% 50%) 0 0/2.4px 2.4px;"></div>
<div class="t" style="left:793.3px;top:288.5px;font-size:6.6px;color:#8c8c8c;transform-origin:0 0;transform:scaleX(0.8493);">guias</div>
<div class="a" style="left:766.6px;top:298px;width:156.2px;height:12.2px;background:#4e7193;"></div>
<div class="a" style="left:768px;top:299.2px;width:10.1px;height:9.6px;background:repeating-conic-gradient(#b8c8d4 0% 25%,#8aa0b4 0% 50%) 0 0/2.4px 2.4px;"></div>
<div class="t" style="left:793.3px;top:301.5px;font-size:6.6px;color:#a9b6c3;transform-origin:0 0;transform:scaleX(0.9714);">texto</div>
<div class="a" style="left:766.6px;top:311.4px;width:156.2px;height:12.2px;background:#4e7193;"></div>
<div class="a" style="left:768px;top:312.59999999999997px;width:10.1px;height:9.6px;background:#fbf6df;"></div>
<div class="t" style="left:792.8px;top:314.9px;font-size:6.6px;color:#e4e4e4;transform-origin:0 0;transform:scaleX(0.8953);">paneles</div>
<div class="a" style="left:766.6px;top:324.7px;width:156.2px;height:12.2px;background:#4e7193;"></div>
<div class="a" style="left:781px;top:325.9px;width:10.1px;height:9.6px;background:repeating-conic-gradient(#ffffff 0% 25%,#e2e2e2 0% 50%) 0 0/2.4px 2.4px;"></div>
<div class="t" style="left:806.2px;top:328.2px;font-size:6.6px;color:#e4e4e4;transform-origin:0 0;transform:scaleX(0.8870);">bordes</div>
<div class="a" style="left:766.6px;top:337.8px;width:156.2px;height:12.2px;background:#303030;"></div>
<div class="a" style="left:781px;top:339.0px;width:10.1px;height:9.6px;background:repeating-conic-gradient(#8a9494 0% 25%,#6f8a8a 0% 50%) 0 0/2.4px 2.4px;"></div>
<div class="t" style="left:806.2px;top:341.3px;font-size:6.6px;color:#7c7c7c;transform-origin:0 0;transform:scaleX(0.8997);">sombra</div>
<div class="a" style="left:766.6px;top:351px;width:156.2px;height:12.2px;background:#303030;"></div>
<div class="a" style="left:781px;top:352.2px;width:10.1px;height:9.6px;background:repeating-conic-gradient(#9a9088 0% 25%,#7e7e7e 0% 50%) 0 0/2.4px 2.4px;"></div>
<div class="t" style="left:806.2px;top:354.5px;font-size:6.6px;color:#7c7c7c;transform-origin:0 0;transform:scaleX(0.8652);">luz</div>
<div class="a" style="left:766.6px;top:364.4px;width:156.2px;height:12.2px;background:#4a4a4a;"></div>
<div class="a" style="left:766.6px;top:364.4px;width:13px;height:12.2px;background:#303030;"></div>
<div class="a" style="left:779.5px;top:364.4px;width:13px;height:12.2px;background:#3a3a3a;"></div>
<div class="a" style="left:781px;top:365.59999999999997px;width:10.1px;height:9.6px;background:repeating-conic-gradient(#ffffff 0% 25%,#e2e2e2 0% 50%) 0 0/2.4px 2.4px;"></div>
<div class="t" style="left:806.2px;top:367.9px;font-size:6.6px;color:#e4e4e4;transform-origin:0 0;transform:scaleX(0.8955);">bocetos</div>
<svg class="a" style="left:0px;top:0px;" width="930" height="523" viewBox="0 0 930 523"><path d="M757.6 289.90000000000003 Q761 286.5 764.4 289.90000000000003 M757.6 292.3 Q761 295.70000000000005 764.4 292.3" stroke="#666" stroke-width="0.7" fill="none"/><path d="M780.5 286.6 L784.5 286.2 L784.0 289.5 M780.5 286.6 L780.9 291.4" stroke="#a0a0a0" stroke-width="0.7" fill="none"/><rect x="896.4" y="290" width="3.6" height="3" fill="#8a8a8a"/><path d="M897 290 L897 288.6 Q898.2 287.6 899.4 288.6" stroke="#8a8a8a" stroke-width="0.6" fill="none"/><path d="M910.6 287.8 Q908.4 294.6 905.6 294.2 Q903.6 293.8 904.2 291 Q905 288 907.2 288.2 Q909.2 288.6 910.8 294.4" stroke="#8a8a8a" stroke-width="0.75" fill="none"/><rect x="779.2" y="285" width="0.6" height="12.2" fill="#383838"/><rect x="786" y="285" width="0.6" height="12.2" fill="#383838"/><rect x="894.3" y="285" width="0.6" height="12.2" fill="#383838"/><rect x="903.5" y="285" width="0.6" height="12.2" fill="#383838"/><rect x="912.7" y="285" width="0.6" height="12.2" fill="#383838"/><path d="M757.6 302.90000000000003 Q761 299.5 764.4 302.90000000000003 M757.6 305.3 Q761 308.70000000000005 764.4 305.3" stroke="#666" stroke-width="0.7" fill="none"/><path d="M780.5 299.4 L782.5 299.4 L783.1 300.2 L784.7 300.2 L784.7 303.4 L780.5 303.4 Z" stroke="#c8d0d8" stroke-width="0.6" fill="none"/><path d="M781.5 305 L783.5 307 L781.5 309" stroke="#c8d0d8" stroke-width="0.5" fill="none"/><rect x="896.4" y="303" width="3.6" height="3" fill="#b8c4d0"/><path d="M897 303 L897 301.6 Q898.2 300.6 899.4 301.6" stroke="#b8c4d0" stroke-width="0.6" fill="none"/><path d="M910.6 300.8 Q908.4 307.6 905.6 307.2 Q903.6 306.8 904.2 304 Q905 301 907.2 301.2 Q909.2 301.6 910.8 307.4" stroke="#b8c4d0" stroke-width="0.75" fill="none"/><rect x="914.5" y="301.6" width="6" height="4.6" fill="none" stroke="#6c88a4" stroke-width="0.6"/><rect x="779.2" y="298" width="0.6" height="12.2" fill="#43607c"/><rect x="786" y="298" width="0.6" height="12.2" fill="#43607c"/><rect x="894.3" y="298" width="0.6" height="12.2" fill="#43607c"/><rect x="903.5" y="298" width="0.6" height="12.2" fill="#43607c"/><rect x="912.7" y="298" width="0.6" height="12.2" fill="#43607c"/><ellipse cx="761" cy="317.7" rx="3.9" ry="3.2" fill="#f0f0f0"/><path d="M757.4 317.7 Q761 316.1 764.6 317.7 Q761 318.9 757.4 317.7 Z" fill="#3a3a3a"/><circle cx="761" cy="317.6" r="0.7" fill="#f0f0f0"/><path d="M780.5 312.79999999999995 L782.5 312.79999999999995 L783.1 313.59999999999997 L784.7 313.59999999999997 L784.7 316.79999999999995 L780.5 316.79999999999995 Z" stroke="#c8d0d8" stroke-width="0.6" fill="none"/><path d="M781.5 318.4 L783.5 320.4 L781.5 322.4" stroke="#c8d0d8" stroke-width="0.5" fill="none"/><rect x="896.4" y="316.4" width="3.6" height="3" fill="#b8c4d0"/><path d="M897 316.4 L897 315.0 Q898.2 314.0 899.4 315.0" stroke="#b8c4d0" stroke-width="0.6" fill="none"/><path d="M910.6 314.2 Q908.4 321.0 905.6 320.59999999999997 Q903.6 320.2 904.2 317.4 Q905 314.4 907.2 314.59999999999997 Q909.2 315.0 910.8 320.79999999999995" stroke="#b8c4d0" stroke-width="0.75" fill="none"/><rect x="914.5" y="315.0" width="6" height="4.6" fill="none" stroke="#6c88a4" stroke-width="0.6"/><rect x="779.2" y="311.4" width="0.6" height="12.2" fill="#43607c"/><rect x="786" y="311.4" width="0.6" height="12.2" fill="#43607c"/><rect x="894.3" y="311.4" width="0.6" height="12.2" fill="#43607c"/><rect x="903.5" y="311.4" width="0.6" height="12.2" fill="#43607c"/><rect x="912.7" y="311.4" width="0.6" height="12.2" fill="#43607c"/><ellipse cx="761" cy="331.0" rx="3.9" ry="3.2" fill="#f0f0f0"/><path d="M757.4 331.0 Q761 329.40000000000003 764.6 331.0 Q761 332.2 757.4 331.0 Z" fill="#3a3a3a"/><circle cx="761" cy="330.90000000000003" r="0.7" fill="#f0f0f0"/><path d="M772.8 328.7 L772.8 332.7 L776 332.7" stroke="#3e5670" stroke-width="0.8" fill="none"/><path d="M793.5 326.3 L797.5 325.9 L797.0 329.2 M793.5 326.3 L793.9 331.09999999999997" stroke="#c8d0d8" stroke-width="0.7" fill="none"/><rect x="896.4" y="329.7" width="3.6" height="3" fill="#b8c4d0"/><path d="M897 329.7 L897 328.3 Q898.2 327.3 899.4 328.3" stroke="#b8c4d0" stroke-width="0.6" fill="none"/><path d="M910.6 327.5 Q908.4 334.3 905.6 333.9 Q903.6 333.5 904.2 330.7 Q905 327.7 907.2 327.9 Q909.2 328.3 910.8 334.09999999999997" stroke="#b8c4d0" stroke-width="0.75" fill="none"/><rect x="779.2" y="324.7" width="0.6" height="12.2" fill="#43607c"/><rect x="792.3" y="324.7" width="0.6" height="12.2" fill="#43607c"/><rect x="894.3" y="324.7" width="0.6" height="12.2" fill="#43607c"/><rect x="903.5" y="324.7" width="0.6" height="12.2" fill="#43607c"/><rect x="912.7" y="324.7" width="0.6" height="12.2" fill="#43607c"/><rect x="799.2" y="324.7" width="0.6" height="12.2" fill="#43607c"/><path d="M757.6 342.70000000000005 Q761 339.3 764.4 342.70000000000005 M757.6 345.1 Q761 348.50000000000006 764.4 345.1" stroke="#666" stroke-width="0.7" fill="none"/><path d="M772.8 341.8 L772.8 345.8 L776 345.8" stroke="#444" stroke-width="0.8" fill="none"/><path d="M793.7 342.0 Q793.7 339.0 796.7 339.40000000000003 Q798.1 341.40000000000003 796.1 342.8 L797.1 344.40000000000003 M795.1 340.8 L796.1 341.0" stroke="#a0a0a0" stroke-width="0.6" fill="none"/><rect x="896.4" y="342.8" width="3.6" height="3" fill="#8a8a8a"/><path d="M897 342.8 L897 341.40000000000003 Q898.2 340.40000000000003 899.4 341.40000000000003" stroke="#8a8a8a" stroke-width="0.6" fill="none"/><path d="M910.6 340.6 Q908.4 347.40000000000003 905.6 347.0 Q903.6 346.6 904.2 343.8 Q905 340.8 907.2 341.0 Q909.2 341.40000000000003 910.8 347.2" stroke="#8a8a8a" stroke-width="0.75" fill="none"/><rect x="913.3" y="339.40000000000003" width="8.6" height="9" fill="#575757"/><circle cx="917.6" cy="343.90000000000003" r="3" fill="#8e8e8e"/><circle cx="917.6" cy="343.90000000000003" r="1.1" fill="#575757"/><path d="M914.6 343.90000000000003 L920.6 343.90000000000003 M917.6 340.90000000000003 L917.6 346.90000000000003" stroke="#575757" stroke-width="0.7"/><rect x="779.2" y="337.8" width="0.6" height="12.2" fill="#383838"/><rect x="792.3" y="337.8" width="0.6" height="12.2" fill="#383838"/><rect x="894.3" y="337.8" width="0.6" height="12.2" fill="#383838"/><rect x="903.5" y="337.8" width="0.6" height="12.2" fill="#383838"/><rect x="912.7" y="337.8" width="0.6" height="12.2" fill="#383838"/><rect x="799.2" y="337.8" width="0.6" height="12.2" fill="#383838"/><path d="M757.6 355.90000000000003 Q761 352.5 764.4 355.90000000000003 M757.6 358.3 Q761 361.70000000000005 764.4 358.3" stroke="#666" stroke-width="0.7" fill="none"/><path d="M772.8 355 L772.8 359 L776 359" stroke="#444" stroke-width="0.8" fill="none"/><path d="M793.7 355.2 Q793.7 352.2 796.7 352.6 Q798.1 354.6 796.1 356 L797.1 357.6 M795.1 354 L796.1 354.2" stroke="#a0a0a0" stroke-width="0.6" fill="none"/><rect x="896.4" y="356" width="3.6" height="3" fill="#8a8a8a"/><path d="M897 356 L897 354.6 Q898.2 353.6 899.4 354.6" stroke="#8a8a8a" stroke-width="0.6" fill="none"/><path d="M910.6 353.8 Q908.4 360.6 905.6 360.2 Q903.6 359.8 904.2 357 Q905 354 907.2 354.2 Q909.2 354.6 910.8 360.4" stroke="#8a8a8a" stroke-width="0.75" fill="none"/><rect x="913.3" y="352.6" width="8.6" height="9" fill="#575757"/><circle cx="917.6" cy="357.1" r="3" fill="#8e8e8e"/><circle cx="917.6" cy="357.1" r="1.1" fill="#575757"/><path d="M914.6 357.1 L920.6 357.1 M917.6 354.1 L917.6 360.1" stroke="#575757" stroke-width="0.7"/><rect x="779.2" y="351" width="0.6" height="12.2" fill="#383838"/><rect x="792.3" y="351" width="0.6" height="12.2" fill="#383838"/><rect x="894.3" y="351" width="0.6" height="12.2" fill="#383838"/><rect x="903.5" y="351" width="0.6" height="12.2" fill="#383838"/><rect x="912.7" y="351" width="0.6" height="12.2" fill="#383838"/><rect x="799.2" y="351" width="0.6" height="12.2" fill="#383838"/><ellipse cx="761" cy="370.7" rx="3.9" ry="3.2" fill="#f0f0f0"/><path d="M757.4 370.7 Q761 369.1 764.6 370.7 Q761 371.9 757.4 370.7 Z" fill="#3a3a3a"/><circle cx="761" cy="370.6" r="0.7" fill="#f0f0f0"/><path d="M772.8 368.4 L772.8 372.4 L776 372.4" stroke="#444" stroke-width="0.8" fill="none"/><path d="M793.7 368.59999999999997 Q793.7 365.59999999999997 796.7 366.0 Q798.1 368.0 796.1 369.4 L797.1 371.0 M795.1 367.4 L796.1 367.59999999999997" stroke="#a0a0a0" stroke-width="0.6" fill="none"/><rect x="896.4" y="369.4" width="3.6" height="3" fill="#8a8a8a"/><path d="M897 369.4 L897 368.0 Q898.2 367.0 899.4 368.0" stroke="#8a8a8a" stroke-width="0.6" fill="none"/><path d="M910.6 367.2 Q908.4 374.0 905.6 373.59999999999997 Q903.6 373.2 904.2 370.4 Q905 367.4 907.2 367.59999999999997 Q909.2 368.0 910.8 373.79999999999995" stroke="#8a8a8a" stroke-width="0.75" fill="none"/><rect x="913.3" y="366.0" width="8.6" height="9" fill="#575757"/><circle cx="917.6" cy="370.5" r="3" fill="#8e8e8e"/><circle cx="917.6" cy="370.5" r="1.1" fill="#575757"/><path d="M914.6 370.5 L920.6 370.5 M917.6 367.5 L917.6 373.5" stroke="#575757" stroke-width="0.7"/><rect x="779.2" y="364.4" width="0.6" height="12.2" fill="#383838"/><rect x="792.3" y="364.4" width="0.6" height="12.2" fill="#383838"/><rect x="894.3" y="364.4" width="0.6" height="12.2" fill="#383838"/><rect x="903.5" y="364.4" width="0.6" height="12.2" fill="#383838"/><rect x="912.7" y="364.4" width="0.6" height="12.2" fill="#383838"/><rect x="799.2" y="364.4" width="0.6" height="12.2" fill="#383838"/></svg>
<div class="a" style="left:781px;top:378px;width:10px;height:1.8px;background:#5a5a5a;"></div>
<div class="a" style="left:795px;top:377.9px;width:1.6px;height:1.6px;background:#ccc;"></div>
<div class="a" style="left:797.4px;top:377.9px;width:1.6px;height:1.6px;background:#ccc;"></div>
<svg class="a" style="left:0px;top:0px;" width="930" height="523" viewBox="0 0 930 523"><rect x="757.4" y="383.7" width="6.6" height="6.6" fill="none" stroke="#ddd" stroke-width="0.8"/><path d="M760.7 385 L760.7 389 M758.7 387 L762.7 387" stroke="#ddd" stroke-width="0.8"/><path d="M767.8 386.2 L771.2 386.2 L769.5 388 Z" fill="#c4c4c4"/><rect x="777.6" y="385.4" width="5.4" height="5" fill="none" stroke="#ddd" stroke-width="0.8"/><path d="M779.6 385.4 L779.6 383.4 L785 383.4 L785 388.4 L783 388.4" stroke="#ddd" stroke-width="0.8" fill="none"/><path d="M793 385 L796.4 388.4 L799.8 385" stroke="#ddd" stroke-width="0.9" fill="none"/><path d="M808 388.4 L811.4 385 L814.8 388.4" stroke="#ddd" stroke-width="0.9" fill="none"/><path d="M823.6 384.3 L830.6 384.3 M823.6 386.8 L830.6 386.8 M823.6 389.3 L830.6 389.3" stroke="#ddd" stroke-width="0.8"/><rect x="826" y="383.6" width="1.3" height="1.4" fill="#ddd"/><rect x="827.6" y="386.1" width="1.3" height="1.4" fill="#ddd"/><rect x="825" y="388.6" width="1.3" height="1.4" fill="#ddd"/><rect x="918.6" y="383.3" width="6.6" height="1" fill="#ddd"/><rect x="920.6" y="382.4" width="2.6" height="1" fill="#ddd"/><path d="M919.2 384.8 L924.6 384.8 L924 390.6 L919.8 390.6 Z" fill="#ddd"/></svg>
<div class="a" style="left:839px;top:395.6px;width:8px;height:0.6px;background:#5d5d5d;"></div>
<div class="a" style="left:754.8px;top:399.7px;width:82.2px;height:10.6px;background:#3f3f3f;border:1px solid #393939;"></div>
<div class="a" style="left:837px;top:398.7px;width:89.5px;height:11.6px;background:#474747;border:1px solid #3d3d3d;border-bottom:none;"></div>
<div class="t" style="left:760.6px;top:401.5px;font-size:6.5px;color:#d4d4d4;transform-origin:0 0;transform:scaleX(0.8879);">Opciones de la herramienta</div>
<div class="t" style="left:843.5px;top:400.9px;font-size:6.5px;color:#dedede;transform-origin:0 0;transform:scaleX(0.9053);">Valores predefinidos de pincel</div>
<div class="t" style="left:756.8px;top:412.6px;font-size:6.5px;color:#dedede;transform-origin:0 0;transform:scaleX(0.8995);">Valores &amp;predefinidos de pincel</div>
<div class="a" style="left:756px;top:421px;width:122.7px;height:10px;background:#424242;border:1px solid #3a3a3a;"></div>
<div class="t" style="left:757.7px;top:423.2px;font-size:6.4px;color:#dedede;transform-origin:0 0;transform:scaleX(1.0009);">Digital</div>
<div class="a" style="left:880px;top:421px;width:36.8px;height:10px;background:#444;border:1px solid #3c3c3c;"></div>
<div class="t" style="left:889.8px;top:423.2px;font-size:6.4px;color:#dedede;transform-origin:0 0;transform:scaleX(0.9325);">Etiqueta</div>
<div class="a" style="left:918px;top:421px;width:11px;height:10px;background:#474747;border:1px solid #3c3c3c;"></div>
<svg class="a" style="left:0px;top:0px;" width="930" height="523" viewBox="0 0 930 523"><path d="M872.2 425.2 L876 425.2 L874.1 427.2 Z" fill="#c4c4c4"/><rect x="883.3" y="423" width="2.6" height="6" fill="none" stroke="#ccc" stroke-width="0.6"/><path d="M914.4 428.6 L916 428.6 L915.2 429.6 Z" fill="#bbb"/><rect x="920" y="423.2" width="7" height="6.4" fill="none" stroke="#ccc" stroke-width="0.7"/><rect x="921" y="425" width="5" height="3.8" fill="#aaa"/></svg>
<div class="a" style="left:756px;top:432.6px;width:167px;height:62.5px;background:#2d2d2d;"></div>
<div class="a" style="left:923px;top:432.6px;width:6px;height:62.5px;background:#3a3a3a;"></div>
<svg class="a" style="left:0px;top:0px;" width="930" height="523" viewBox="0 0 930 523"><path d="M924.1 437.6 L927.9 437.6 L926 435.4 Z M924.1 490.8 L927.9 490.8 L926 493 Z" fill="#d0d0d0"/></svg>
<svg class="a" style="left:0px;top:0px;" width="930" height="523" viewBox="0 0 930 523"><rect x="756.0" y="432.9" width="22.4" height="22.1" fill="#d3d3d3"/><svg x="756.0" y="432.9" width="22.4" height="22.1" style="overflow:hidden"><g transform="translate(-756.00,-432.90)"><path d="M767.0 444.9 L777.0 435.9" stroke="#2f6fd0" stroke-width="3.2" stroke-linecap="round"/><path d="M766.4 445.5 L768.80 443.28" stroke="#e8e8e8" stroke-width="2" stroke-linecap="round"/><path d="M763.0 451.9 L771.0 448.9" stroke="#fafafa" stroke-width="1.4" fill="none" stroke-linecap="round" stroke-dasharray="0.8 0.8"/></g></svg><rect x="779.8" y="432.9" width="22.4" height="22.1" fill="#d3d3d3"/><svg x="779.8" y="432.9" width="22.4" height="22.1" style="overflow:hidden"><g transform="translate(-779.80,-432.90)"><ellipse cx="792.8" cy="439.9" rx="6" ry="4.5" transform="rotate(-40 792.8 439.9)" fill="#8a8a8a"/><path d="M783.8 448.9 L793.8 451.9" stroke="#f4f4f4" stroke-width="2" fill="none" stroke-linecap="round" stroke-dasharray="0.7 0.7"/></g></svg><rect x="803.6" y="432.9" width="22.4" height="22.1" fill="#d3d3d3"/><svg x="803.6" y="432.9" width="22.4" height="22.1" style="overflow:hidden"><g transform="translate(-803.60,-432.90)"><circle cx="807.6" cy="449.9" r="6" fill="#444" opacity="0.85"/><circle cx="807.6" cy="449.9" r="8" fill="#555" opacity="0.3"/><path d="M814.6 444.9 L824.6 434.9" stroke="#cfcfcf" stroke-width="3" stroke-linecap="round"/><path d="M814.0 445.5 L816.40 443.10" stroke="#333" stroke-width="1.6" stroke-linecap="round"/><path d="M816.6 440.9 L820.6 437.9" stroke="#222" stroke-width="1.2" fill="none" stroke-linecap="round" /></g></svg><rect x="827.4" y="432.9" width="22.4" height="22.1" fill="#d3d3d3"/><svg x="827.4" y="432.9" width="22.4" height="22.1" style="overflow:hidden"><g transform="translate(-827.40,-432.90)"><path d="M836.4 443.9 L847.4 434.9" stroke="#3a3a3a" stroke-width="2.8" stroke-linecap="round"/><path d="M835.8 444.5 L838.38 442.28" stroke="#ccc" stroke-width="1.2" stroke-linecap="round"/><path d="M828.4 449.9 Q837.4 447.9 848.4 450.9" stroke="#111" stroke-width="2.8" fill="none" stroke-linecap="round" /></g></svg><rect x="851.2" y="432.9" width="22.4" height="22.1" fill="#d3d3d3"/><svg x="851.2" y="432.9" width="22.4" height="22.1" style="overflow:hidden"><g transform="translate(-851.20,-432.90)"><path d="M860.2 443.9 L871.2 434.9" stroke="#2a2a2a" stroke-width="2.8" stroke-linecap="round"/><path d="M859.6 444.5 L862.18 442.28" stroke="#111" stroke-width="1.2" stroke-linecap="round"/><path d="M855.2 447.9 Q859.2 451.9 871.2 449.9" stroke="#555" stroke-width="2.4" fill="none" stroke-linecap="round" /></g></svg><rect x="875.0" y="432.9" width="22.4" height="22.1" fill="#8db9de"/><rect x="875.5" y="433.4" width="21.4" height="21.1" fill="none" stroke="#4e7aa3" stroke-width="1"/><svg x="875.0" y="432.9" width="22.4" height="22.1" style="overflow:hidden"><g transform="translate(-875.00,-432.90)"><path d="M884.0 442.9 L895.0 434.9" stroke="#5aa6d8" stroke-width="2.6" stroke-linecap="round"/><path d="M883.4 443.5 L885.98 441.46" stroke="#2a5a8a" stroke-width="1.2" stroke-linecap="round"/><path d="M882.0 448.9 Q889.0 447.9 895.0 449.9" stroke="#2e5f9c" stroke-width="2.6" fill="none" stroke-linecap="round" /></g></svg><rect x="898.8" y="432.9" width="22.4" height="22.1" fill="#d3d3d3"/><svg x="898.8" y="432.9" width="22.4" height="22.1" style="overflow:hidden"><g transform="translate(-898.80,-432.90)"><path d="M908.8 443.9 L919.8 434.9" stroke="#a8a8a8" stroke-width="2.8" stroke-linecap="round"/><path d="M908.1999999999999 444.5 L910.78 442.28" stroke="#f0f0f0" stroke-width="1.4" stroke-linecap="round"/><path d="M904.8 448.9 Q911.8 446.9 919.8 449.9" stroke="#9a9a9a" stroke-width="2.6" fill="none" stroke-linecap="round" /></g></svg><rect x="756.0" y="456.6" width="22.4" height="22.1" fill="#d3d3d3"/><svg x="756.0" y="456.6" width="22.4" height="22.1" style="overflow:hidden"><g transform="translate(-756.00,-456.60)"><path d="M764.0 468.6 L777.0 457.6" stroke="#6a6a6a" stroke-width="2" stroke-linecap="round"/><path d="M763.4 469.20000000000005 L766.34 466.62" stroke="#5a3520" stroke-width="1.8" stroke-linecap="round"/><path d="M774.0 459.6 L777.0 457.6" stroke="#e08a20" stroke-width="2.2" fill="none" stroke-linecap="round" /><path d="M763.0 471.6 Q766.0 475.6 770.0 473.6 Q773.0 472.6 777.0 471.6" stroke="#333" stroke-width="1.6" fill="none" stroke-linecap="round" /></g></svg><rect x="779.8" y="456.6" width="22.4" height="22.1" fill="#d3d3d3"/><svg x="779.8" y="456.6" width="22.4" height="22.1" style="overflow:hidden"><g transform="translate(-779.80,-456.60)"><path d="M787.8 468.6 L800.8 457.6" stroke="#555" stroke-width="1.6" stroke-linecap="round"/><path d="M787.1999999999999 469.20000000000005 L790.14 466.62" stroke="#5a3520" stroke-width="1.4" stroke-linecap="round"/><path d="M796.8 459.6 L800.8 457.20000000000005" stroke="#e08a20" stroke-width="2" fill="none" stroke-linecap="round" /><path d="M784.8 475.6 L790.8 471.6 L791.8 474.6 Q796.8 472.6 800.8 470.6" stroke="#333" stroke-width="0.8" fill="none" stroke-linecap="round" /></g></svg><rect x="803.6" y="456.6" width="22.4" height="22.1" fill="#d3d3d3"/><svg x="803.6" y="456.6" width="22.4" height="22.1" style="overflow:hidden"><g transform="translate(-803.60,-456.60)"><path d="M812.6 468.6 L824.6 457.6" stroke="#2a2a2a" stroke-width="2.4" stroke-linecap="round"/><path d="M812.0 469.20000000000005 L814.76 466.62" stroke="#111" stroke-width="1.2" stroke-linecap="round"/><path d="M808.6 473.6 L811.6 472.6 L812.6 474.6 L815.6 472.6 L817.6 474.6 L820.6 472.6 L824.6 473.6" stroke="#444" stroke-width="0.8" fill="none" stroke-linecap="round" /></g></svg><rect x="827.4" y="456.6" width="22.4" height="22.1" fill="#d3d3d3"/><svg x="827.4" y="456.6" width="22.4" height="22.1" style="overflow:hidden"><g transform="translate(-827.40,-456.60)"><path d="M836.4 467.6 L848.4 457.6" stroke="#b8b8c8" stroke-width="2.6" stroke-linecap="round"/><path d="M835.8 468.20000000000005 L838.56 465.80" stroke="#333" stroke-width="1.2" stroke-linecap="round"/><path d="M843.4 460.6 L846.4 458.6" stroke="#3a7ad0" stroke-width="2.4" fill="none" stroke-linecap="round" /><path d="M837.4 470.6 Q829.4 472.6 832.4 475.6 Q841.4 475.6 848.4 473.6" stroke="#333" stroke-width="1" fill="none" stroke-linecap="round" /></g></svg><rect x="851.2" y="456.6" width="22.4" height="22.1" fill="#d3d3d3"/><svg x="851.2" y="456.6" width="22.4" height="22.1" style="overflow:hidden"><g transform="translate(-851.20,-456.60)"><path d="M860.2 468.6 L872.2 457.6" stroke="#3d6fc0" stroke-width="3" stroke-linecap="round"/><path d="M859.6 469.20000000000005 L862.36 466.62" stroke="#222" stroke-width="1.6" stroke-linecap="round"/><circle cx="859.2" cy="471.6" r="2.2" fill="#111"/><path d="M862.2 473.6 Q866.2 470.6 871.2 473.6" stroke="#aaa" stroke-width="2.4" fill="none" stroke-linecap="round" /><path d="M855.2 460.6 L857.2 461.6" stroke="#555" stroke-width="0.6" fill="none" stroke-linecap="round" /></g></svg><rect x="875.0" y="456.6" width="22.4" height="22.1" fill="#d3d3d3"/><svg x="875.0" y="456.6" width="22.4" height="22.1" style="overflow:hidden"><g transform="translate(-875.00,-456.60)"><path d="M884.0 468.6 L896.0 457.6" stroke="#b2505a" stroke-width="3" stroke-linecap="round"/><path d="M883.4 469.20000000000005 L886.16 466.62" stroke="#222" stroke-width="1.4" stroke-linecap="round"/><path d="M880.0 474.6 Q886.0 470.6 887.0 473.6 Q892.0 475.6 896.0 471.6" stroke="#111" stroke-width="1.4" fill="none" stroke-linecap="round" /></g></svg><rect x="898.8" y="456.6" width="22.4" height="22.1" fill="#d3d3d3"/><svg x="898.8" y="456.6" width="22.4" height="22.1" style="overflow:hidden"><g transform="translate(-898.80,-456.60)"><path d="M908.8 467.6 L919.8 457.6" stroke="#3d8ad0" stroke-width="3.6" stroke-linecap="round"/><path d="M908.1999999999999 468.20000000000005 L910.78 465.80" stroke="#2a2a2a" stroke-width="2" stroke-linecap="round"/><ellipse cx="912.8" cy="474.6" rx="7" ry="2.6" fill="#333" opacity="0.85"/><path d="M902.8 460.6 L904.8 461.6" stroke="#555" stroke-width="0.6" fill="none" stroke-linecap="round" /></g></svg><rect x="756.0" y="480.3" width="22.4" height="14.9" fill="#d3d3d3"/><svg x="756.0" y="480.3" width="22.4" height="14.9" style="overflow:hidden"><g transform="translate(-756.00,-480.30)"><path d="M767.0 492.3 L777.0 482.3" stroke="#f4f4f4" stroke-width="3" stroke-linecap="round"/><path d="M766.4 492.90000000000003 L768.80 490.50" stroke="#ddd" stroke-width="1" stroke-linecap="round"/><rect x="759.5" y="484.3" width="2.6" height="2.2" fill="#4a9ae0"/></g></svg><rect x="779.8" y="480.3" width="22.4" height="14.9" fill="#d3d3d3"/><svg x="779.8" y="480.3" width="22.4" height="14.9" style="overflow:hidden"><g transform="translate(-779.80,-480.30)"><path d="M790.8 492.3 L800.8 482.3" stroke="#5aa6e0" stroke-width="1.6" stroke-linecap="round"/><path d="M790.1999999999999 492.90000000000003 L792.60 490.50" stroke="#fff" stroke-width="3.4" stroke-linecap="round"/><rect x="783.3" y="484.3" width="2.6" height="2.2" fill="#4a9ae0"/></g></svg><rect x="803.6" y="480.3" width="22.4" height="14.9" fill="#d3d3d3"/><svg x="803.6" y="480.3" width="22.4" height="14.9" style="overflow:hidden"><g transform="translate(-803.60,-480.30)"><ellipse cx="818.6" cy="488.3" rx="6" ry="3.4" transform="rotate(-40 818.6 488.3)" fill="#f4f4f4"/><rect x="807.1" y="484.3" width="2.6" height="2.2" fill="#4a9ae0"/></g></svg><rect x="827.4" y="480.3" width="22.4" height="14.9" fill="#d3d3d3"/><svg x="827.4" y="480.3" width="22.4" height="14.9" style="overflow:hidden"><g transform="translate(-827.40,-480.30)"><path d="M837.4 492.3 L848.4 482.3" stroke="#2a2a2a" stroke-width="3" stroke-linecap="round"/><path d="M836.8 492.90000000000003 L839.38 490.50" stroke="#111" stroke-width="1" stroke-linecap="round"/><rect x="830.9" y="484.3" width="2.6" height="2.2" fill="#4a9ae0"/></g></svg><rect x="851.2" y="480.3" width="22.4" height="14.9" fill="#d3d3d3"/><svg x="851.2" y="480.3" width="22.4" height="14.9" style="overflow:hidden"><g transform="translate(-851.20,-480.30)"><path d="M859.2 492.3 L872.2 482.3" stroke="#222" stroke-width="1.2" fill="none" stroke-linecap="round" /><ellipse cx="857.2" cy="493.8" rx="5" ry="2" fill="#c04ae0"/><circle cx="860.2" cy="491.3" r="1.6" fill="#fff"/></g></svg><rect x="875.0" y="480.3" width="22.4" height="14.9" fill="#d3d3d3"/><svg x="875.0" y="480.3" width="22.4" height="14.9" style="overflow:hidden"><g transform="translate(-875.00,-480.30)"><path d="M884.0 491.3 L896.0 482.3" stroke="#222" stroke-width="1.2" fill="none" stroke-linecap="round" /><ellipse cx="879.0" cy="494.3" rx="5" ry="2" fill="#f6f0c8"/><path d="M884.0 487.3 L885.0 490.3 L888.0 490.7 L885.6 492.3 L886.4 494.90000000000003 L884.0 493.3 L881.6 494.90000000000003 L882.4 492.3 L880.0 490.7 L883.0 490.3 Z" fill="#d8a040"/></g></svg><rect x="898.8" y="480.3" width="22.4" height="14.9" fill="#d3d3d3"/><svg x="898.8" y="480.3" width="22.4" height="14.9" style="overflow:hidden"><g transform="translate(-898.80,-480.30)"><path d="M908.8 492.3 L916.8 483.3 L920.8 487.3 L912.8 495.3 Z" fill="#2a2a2a"/><ellipse cx="903.8" cy="494.3" rx="5" ry="2" fill="#8ad8f0"/></g></svg></svg>
<div class="a" style="left:756px;top:496.4px;width:160.5px;height:10.2px;background:#333333;"></div>
<div class="t" style="left:757.2px;top:499px;font-size:6.4px;color:#6e6e6e;transform-origin:0 0;transform:scaleX(0.8936);">Buscar</div>
<div class="a" style="left:917.4px;top:496.4px;width:10.6px;height:10.2px;background:#474747;border:1px solid #3c3c3c;"></div>
<svg class="a" style="left:0px;top:0px;" width="930" height="523" viewBox="0 0 930 523"><rect x="919.6" y="498.2" width="6.2" height="6.4" fill="none" stroke="#bdbdbd" stroke-width="0.8"/><rect x="921" y="498.2" width="3.4" height="2" fill="#bdbdbd"/><rect x="920.8" y="502.2" width="3.8" height="2.4" fill="#9a9a9a"/></svg>
<svg class="a" style="left:0px;top:0px;" width="930" height="523" viewBox="0 0 930 523"><rect x="26" y="511.2" width="7.4" height="7.4" fill="none" stroke="#9a9a9a" stroke-width="0.7"/><rect x="27.8" y="513" width="3.8" height="3.8" fill="none" stroke="#7a7a7a" stroke-width="0.6"/></svg>
<div class="t" style="left:40.9px;top:513px;font-size:6.4px;color:#d8d8d8;transform-origin:0 0;transform:scaleX(1.0068);">b) Basic-3 Flow</div>
<div class="t" style="left:242.6px;top:513px;font-size:6.4px;color:#d8d8d8;transform-origin:0 0;transform:scaleX(0.9858);">RGB/Alfa (Entero de 8 bits/canal) &nbsp;sRGB-elle-V2-srgbtrc.icc</div>
<div class="a" style="left:652.9px;top:510.4px;width:75.3px;height:9.6px;background:#414141;border:1px solid #3a3a3a;"></div>
<div class="a" style="left:653.6px;top:511.2px;width:12.7px;height:8.2px;background:#4d7aa0;"></div>
<div class="t" style="left:654.5px;top:513px;font-size:6.4px;color:#d8d8d8;transform-origin:0 0;transform:scaleX(0.9845);">2.930 x 4.261 (509,0 MiB)</div>
<div class="t" style="left:856px;top:513.1px;font-size:6.4px;color:#d8d8d8;transform-origin:0 0;transform:scaleX(1.0305);">20%</div>
<div class="a" style="left:878.2px;top:514.6px;width:39.2px;height:2.6px;background:#2e2e2e;"></div>
<div class="a" style="left:878.2px;top:515.2px;width:6.4px;height:1.2px;background:#5a8ec0;"></div>
<div class="a" style="left:884.5px;top:512.9px;width:5.4px;height:5.3px;background:#3a3a3a;border:1px solid #2c2c2c;border-radius:1px;"></div>
<svg class="a" style="left:0px;top:0px;" width="930" height="523" viewBox="0 0 930 523"><rect x="920.8" y="511.4" width="6.3" height="7.8" fill="#f4f4f4"/><circle cx="924" cy="515.3" r="2" fill="#4a90d0"/><circle cx="924" cy="515.3" r="0.9" fill="#e0c040"/></svg>
<svg class="a" style="left:0px;top:0px;" width="930" height="523" viewBox="0 0 930 523"><g fill="none" stroke="#8e8b80" stroke-width="0.55" stroke-linecap="round" opacity="0.55"><path d="M292.6 185 Q302.2 172 313.6 184"/><path d="M292.6 185 Q303.1 193 313.6 184"/><path d="M294 183 Q303 176 311 181"/><path d="M363.4 183 Q372.9 171 384.4 185"/><path d="M363.4 183 Q373.9 192 384.4 185"/><path d="M366 181 Q374 174 382 182"/><path d="M323.2 161 L322.2 170.6"/><path d="M353.8 163 L355.7 170.6"/><path d="M290.7 164.9 L313.6 163"/><path d="M365.3 164.9 L386.3 165.8"/><path d="M321.3 173.5 Q332.8 193.5 330.8 224.1"/><path d="M323 175 Q333 195 328 215"/><path d="M353.8 173.5 Q342.3 191.6 350 218.4"/><path d="M319.4 222.2 Q315 229 334.7 235.6 Q347 236 355.7 231.8 Q368 226 363.4 221.3"/><path d="M317.5 224.1 L306 239.4"/><path d="M367.2 226 L374.8 239.4"/><path d="M312.5 230 L294.6 260.5"/><path d="M371.3 232.1 L394.4 261.5"/><path d="M295.6 270 Q320 256 341.9 255.2 Q362 255 386 267.8"/><path d="M298 268 Q322 259 342 258 Q365 259 384 267"/><path d="M296.7 268.9 Q341.9 266 386 267.8"/><path d="M299.8 270 Q341.9 279 381.8 268.9"/><path d="M302 271 Q342 276 380 270"/><path d="M300.9 272 L293.5 302.5"/><path d="M379.7 270 L395.5 301.5"/><path d="M298.8 310.9 Q331.4 326 388.1 309.9"/><path d="M294 316 Q330 322 362 314"/><path d="M300 313 Q335 320 370 316"/><path d="M314.6 324.6 L310 333"/><path d="M377.5 324.6 L385 335"/><path d="M390 155.1 L527.7 153.3"/><path d="M400.3 155.1 Q415.3 140 427.9 154.6"/><path d="M403.8 156.9 Q415 158 426.7 154.6"/><path d="M402 155 Q415 152 427 153"/><path d="M399.2 139 Q413 135 426.7 136.7"/><path d="M439.4 129.8 Q438 136 433.6 140.2"/><path d="M483 153.9 Q493.3 139 507.1 153.3"/><path d="M483 153.9 Q494 160 507.1 153.3"/><path d="M483 134.4 Q500.2 126 516.3 134.4"/><path d="M476.1 131 L478.4 137.9"/><path d="M433.6 143.6 Q452 165 452 175.8 L449.7 187.2"/><path d="M474.9 142.5 Q461.2 160 461.2 166.6 L463.5 182.6"/><path d="M430.2 191.8 Q433.6 198 458.9 204.5 Q480 200 484.1 195.3 Q488 190 481.8 186.1"/><path d="M438 190 Q448 183 458 186 Q468 182 480 188"/><path d="M429 191.8 L419.8 214.8"/><path d="M486.4 191.8 L500.2 214.8"/><path d="M396.9 162 Q390 175 392.3 180.3 Q395 200 403.8 214.8"/><path d="M518.6 168.9 Q512 185 511.7 191.8 L509.4 214.8"/><path d="M429.8 224.9 Q464.5 216 499.3 223.7"/><path d="M447.1 229.9 L449.6 244.8"/><path d="M462 232.4 L464.5 242.3"/><path d="M428 249 Q426 241 440 240 Q450 242 449 247"/><path d="M466 244 Q470 238 483 240 Q490 245 484 249"/><path d="M429.8 249.8 Q454.6 258 484.4 247.3"/><path d="M424.8 247.3 Q418 270 414.8 284.5 L407.4 314.3"/><path d="M486.9 249.8 Q495 270 504.3 284.5"/><path d="M414.8 289.5 Q434.7 274.6 459.6 272.1 Q480 274 491.9 282"/><path d="M420 287 Q440 278 460 276 Q478 278 489 283"/><path d="M417.3 285.8 L491.9 283.3"/><path d="M419.8 289.5 Q459.6 292 494.3 284.5"/><path d="M489.4 289.5 L506.8 311.9"/><path d="M422.3 329.3 Q464.5 335 499.3 321.8"/><path d="M430 331 Q460 329 476 325"/><path d="M397.5 327 L407.4 314.3"/><path d="M499.3 324 L516.8 336.8"/><path d="M427 336 L423 341"/><path d="M466 337 L467 342"/><path d="M404 156.6 L426 154.4" stroke="#4a4a4a" stroke-width="0.9"/><circle cx="303" cy="183.5" r="3" /><circle cx="372.9" cy="182.4" r="3.3" stroke="#6a6860"/><circle cx="493.3" cy="151" r="3.3"/><path d="M354 234 Q357 233 359 231" stroke="#5a7ca0" stroke-width="1"/></g><g fill="none" stroke="#8e8b80" stroke-width="0.5" opacity="0.28"><path d="M285 187 Q288 172 305 173 Q322 175 322 188 Q320 200 302 200 Q286 199 285 187"/><path d="M350 186 Q352 172 372 172 Q393 174 393 187 Q391 199 371 199 Q351 199 350 186"/><path d="M394 158 Q396 143 415 143 Q436 145 436 158 Q435 172 414 172 Q395 171 394 158"/><path d="M476 158 Q478 143 498 143 Q520 145 520 158 Q518 172 497 172 Q477 171 476 158"/><path d="M417.5 118.4 Q458.9 123 509.4 114.9"/><path d="M324.4 119.6 Q355 115 386.7 113.4"/><path d="M299.4 129 Q330 126 355.5 125.9"/><path d="M305.7 144.6 L318.1 146.1"/><path d="M396.9 173.5 L523.1 171.2"/></g></svg>
<svg class="a" style="left:0px;top:0px;" width="930" height="523" viewBox="0 0 930 523"><g fill="none" stroke="#77756c" stroke-width="0.6" stroke-linecap="round" opacity="0.8"><path d="M305 374.8 Q325 364 367.1 359.3 Q382 358 381.4 361.8 Q378 367 345 373 Q318 378 305 374.8"/><path d="M312 374 Q335 370 362 365 Q376 362 379 362"/><path d="M332.3 356.2 L331.7 369.9"/><path d="M334.8 354.3 Q342 351 351 351.2 L357.2 357.4 L358.4 372.3"/><path d="M333.6 369.9 Q346 365.5 358.4 369.9"/><path d="M333.6 371 Q346 375 358.4 371.5"/><path d="M333.6 377.3 L342.9 393.5"/><path d="M356.6 382.3 L357.8 394.7"/><path d="M347.2 373.6 L349.7 387.3"/><path d="M346.5 384 L351.5 383"/><path d="M346 387 Q348 389 350 386"/><path d="M342.2 393 Q332 397 325.6 400.5 Q318 404 316.6 406.6 Q314.5 412 314.3 420.1 L312.8 435.2 L311.3 456.2"/><path d="M323.3 405.1 L318.1 432.2"/><path d="M315 433.7 L322.6 432.9"/><path d="M337.6 411.1 Q334 423 331.6 435.2 L325.6 456.2"/><path d="M343.7 417.1 L336.1 439.7 L332.4 454.7"/><path d="M329 447 L333 456"/><path d="M331 446 L330 456"/><path d="M337.6 411.1 Q349.7 403.5 357.2 400.5 L361.7 405.1 L358.7 412.6 L357.2 415.6"/><path d="M342.2 417.1 Q351.2 415.6 357.2 411.1"/><path d="M360 404 L365 406"/><path d="M342.2 396 Q352 397 360.2 396.8 L366.2 393"/><path d="M363.2 391.5 Q376 391 384.3 394.5 Q389 399 391.8 405.1 L399.4 426.1"/><path d="M372.3 396 L376.8 412.6 L385.8 435.2 L386.6 456.2"/><path d="M385.8 433.7 L399.4 426.9 L400.9 430.6 L388.8 436.7 Z"/><path d="M390.3 438.2 L405.4 450.2 L414.4 453.2"/><path d="M400.9 430.6 L417.4 442.7 L428 448.7 L431 456.2"/><path d="M414.4 448.7 L415.9 457.7"/><path d="M391.8 448.7 L396.3 456.2"/><path d="M393.3 449.4 L403.9 454.7"/></g></svg>
<svg class="a" style="left:0px;top:0px;" width="930" height="523" viewBox="0 0 930 523"><circle cx="654.5" cy="276.5" r="2.2" fill="none" stroke="#4ab84a" stroke-width="0.6" opacity="0.8"/></svg>
<svg class="a" style="left:0px;top:0px;" width="930" height="523" viewBox="0 0 930 523"><rect x="28.5" y="35.5" width="3.5" height="0.7" fill="#c8c8c8"/><rect x="56.6" y="35.5" width="3.0" height="0.7" fill="#c8c8c8"/><rect x="80.1" y="35.5" width="3.3" height="0.7" fill="#c8c8c8"/><rect x="97" y="35.5" width="1.8" height="0.7" fill="#c8c8c8"/><rect x="125.4" y="35.5" width="3.6" height="0.7" fill="#c8c8c8"/><rect x="147.3" y="35.5" width="3.2" height="0.7" fill="#c8c8c8"/><rect x="194.4" y="35.5" width="2.2" height="0.7" fill="#c8c8c8"/><rect x="239.4" y="35.5" width="2.6" height="0.7" fill="#c8c8c8"/><rect x="260.4" y="35.5" width="2.6" height="0.7" fill="#c8c8c8"/><rect x="303.6" y="35.5" width="2.8" height="0.7" fill="#c8c8c8"/><rect x="329" y="35.5" width="2.8" height="0.7" fill="#c8c8c8"/><rect x="761.8" y="246.2" width="3.0" height="0.6" fill="#bdbdbd"/><rect x="836.5" y="246.2" width="3.0" height="0.6" fill="#bdbdbd"/><rect x="858.5" y="246.2" width="2.5" height="0.6" fill="#bdbdbd"/><rect x="761" y="408.2" width="3.5" height="0.6" fill="#bdbdbd"/><rect x="870.2" y="408.2" width="3.0" height="0.6" fill="#bdbdbd"/><rect x="201.2" y="68.4" width="3.0" height="0.6" fill="#bdbdbd"/><rect x="548.2" y="68.4" width="3.0" height="0.6" fill="#bdbdbd"/></svg>
</body></html>
